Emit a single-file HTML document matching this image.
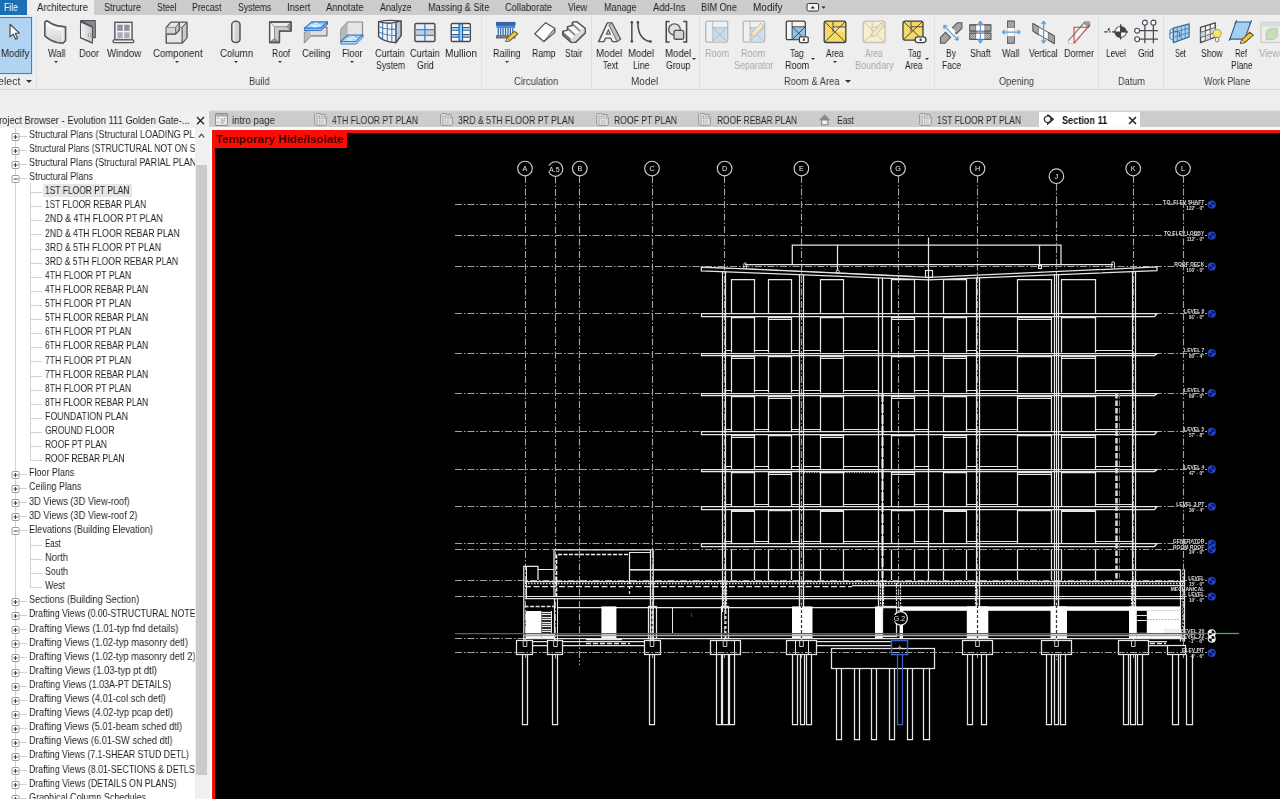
<!DOCTYPE html><html><head><meta charset="utf-8"><title>Revit - Section 11</title><style>

html,body{margin:0;padding:0}
body{width:1280px;height:799px;overflow:hidden;position:relative;background:#eeeeee;font-family:"Liberation Sans",sans-serif}
.t{position:absolute;white-space:nowrap;transform-origin:0 50%;display:block;will-change:transform}
.arr{position:absolute;width:0;height:0;display:block}
#menubar{position:absolute;left:0;top:0;width:1280px;height:14.8px;background:#cccccc;overflow:hidden}
#filetab{position:absolute;left:0;top:0;width:27px;height:14.8px;background:#1d6fb4}
#acttab{position:absolute;left:27.4px;top:0;width:67.1px;height:14.8px;background:#eeeeee}
#ribbon{position:absolute;left:0;top:14.5px;width:1280px;height:75.3px;background:#eeeeee;border-bottom:1.2px solid #d6d6d6;overflow:hidden;box-sizing:border-box}
#modbtn{position:absolute;left:-1px;top:2.5px;width:33px;height:56.5px;background:#b1d4f2;border:1px solid #4b7db1;box-shadow:0 0 1.5px 1px #cfe6fa;box-sizing:border-box}
.psep{position:absolute;top:1px;width:1px;height:72px;background:#e0e0e0}
#browser{position:absolute;left:0;top:110px;width:211px;height:689px;background:#f0f0f0;overflow:hidden}
#bhead{position:absolute;left:0;top:2px;width:208.5px;height:16px;background:#f0f0f0}
#tree{position:absolute;left:0;top:18px;width:194.5px;height:671px;background:#fff;overflow:hidden}
.vl{position:absolute;width:0;border-left:1px solid #d2d2d2}
.hl{position:absolute;height:0;border-top:1px solid #d2d2d2}
.bx{position:absolute}
#sb{position:absolute;left:194.5px;top:18px;width:13.5px;height:671px;background:#f0f0f0}
#sbthumb{position:absolute;left:1px;top:36.5px;width:11.5px;height:610px;background:#cbcbcb}
#tabs{position:absolute;left:208.5px;top:110px;width:1072px;height:17.4px;background:linear-gradient(#eeeeee 0,#cccccc 1.6px);overflow:hidden}
#tabact{position:absolute;left:830.9px;top:1.9px;width:100.6px;height:17px;background:#fff}
.ti{position:absolute;display:block;line-height:0}
#wl{position:absolute;left:209.8px;top:127.4px;width:1071px;height:672px;background:#fafafa}
#canvas{position:absolute;left:211px;top:129px;width:1069px;height:670px;background:#000;overflow:hidden}

</style></head><body><div id="wrap">
<div id="menubar">
<div id="filetab"></div><div id="acttab"></div>
<span class="t" style="left:3.5px;top:1.8px;font-size:10px;line-height:12px;color:#fff;transform:scaleX(0.869);">File</span>
<span class="t" style="left:37.0px;top:1.8px;font-size:10px;line-height:12px;color:#222;transform:scaleX(0.956);">Architecture</span>
<span class="t" style="left:103.7px;top:1.8px;font-size:10px;line-height:12px;color:#222;transform:scaleX(0.912);">Structure</span>
<span class="t" style="left:156.7px;top:1.8px;font-size:10px;line-height:12px;color:#222;transform:scaleX(0.856);">Steel</span>
<span class="t" style="left:192.0px;top:1.8px;font-size:10px;line-height:12px;color:#222;transform:scaleX(0.870);">Precast</span>
<span class="t" style="left:237.5px;top:1.8px;font-size:10px;line-height:12px;color:#222;transform:scaleX(0.866);">Systems</span>
<span class="t" style="left:286.7px;top:1.8px;font-size:10px;line-height:12px;color:#222;transform:scaleX(0.932);">Insert</span>
<span class="t" style="left:325.5px;top:1.8px;font-size:10px;line-height:12px;color:#222;transform:scaleX(0.937);">Annotate</span>
<span class="t" style="left:379.5px;top:1.8px;font-size:10px;line-height:12px;color:#222;transform:scaleX(0.885);">Analyze</span>
<span class="t" style="left:427.5px;top:1.8px;font-size:10px;line-height:12px;color:#222;transform:scaleX(0.918);">Massing &amp; Site</span>
<span class="t" style="left:505.0px;top:1.8px;font-size:10px;line-height:12px;color:#222;transform:scaleX(0.919);">Collaborate</span>
<span class="t" style="left:568.0px;top:1.8px;font-size:10px;line-height:12px;color:#222;transform:scaleX(0.884);">View</span>
<span class="t" style="left:603.7px;top:1.8px;font-size:10px;line-height:12px;color:#222;transform:scaleX(0.899);">Manage</span>
<span class="t" style="left:653.0px;top:1.8px;font-size:10px;line-height:12px;color:#222;transform:scaleX(0.943);">Add-Ins</span>
<span class="t" style="left:701.2px;top:1.8px;font-size:10px;line-height:12px;color:#222;transform:scaleX(0.907);">BIM One</span>
<span class="t" style="left:753.0px;top:1.8px;font-size:10px;line-height:12px;color:#222;transform:scaleX(1.002);">Modify</span>
<svg style="position:absolute;left:806px;top:2px" width="22" height="11" viewBox="0 0 22 11"><rect x="1" y="1.5" width="11.5" height="7.5" rx="1.5" fill="#f4f4f4" stroke="#333" stroke-width="1"/><path d="M4.5 6.5 L6.7 4 L9 6.5Z" fill="#222"/><path d="M15.5 4.5 h4 l-2 2.3z" fill="#222"/></svg>
</div>
<div id="ribbon">
<div id="modbtn"></div>
<svg style="position:absolute;left:0;top:0" width="1280" height="74" viewBox="0 14.5 1280 74">
<defs>
<linearGradient id="gv" x1="0" y1="0" x2="0" y2="1"><stop offset="0" stop-color="#fafafa"/><stop offset="1" stop-color="#cfd2d6"/></linearGradient>
<linearGradient id="gh" x1="0" y1="0" x2="1" y2="0"><stop offset="0" stop-color="#f6f6f6"/><stop offset="1" stop-color="#c4c7cb"/></linearGradient>
<linearGradient id="gd" x1="0" y1="0" x2="1" y2="1"><stop offset="0" stop-color="#9aa0a8"/><stop offset="1" stop-color="#d8dadd"/></linearGradient>
<linearGradient id="gb" x1="0" y1="0" x2="0" y2="1"><stop offset="0" stop-color="#7db9ee"/><stop offset="1" stop-color="#c8e4fb"/></linearGradient>
<pattern id="hatch" width="2" height="2" patternUnits="userSpaceOnUse"><rect width="2" height="2" fill="#bcbcbc"/><rect width="1" height="1" fill="#8c8c8c"/><rect x="1" y="1" width="1" height="1" fill="#8c8c8c"/></pattern>
</defs>
<g transform="translate(4.3,21.4) scale(0.817,0.787)"><path d="M7 3 L7 19 L11 15.5 L13.8 22 L16.2 21 L13.4 14.6 L18.5 14.2 Z" fill="#fdfdfd" stroke="#444" stroke-width="1.4" stroke-linejoin="round"/></g>
<g transform="translate(44.3,20.1) scale(0.904,0.958)"><path d="M.5 2.6 Q.5 .6 3.6 .5 Q11 6 23.5 6.4 L23.5 20.8 L20.6 23.5 Q8 23 .5 15.7 Z" fill="url(#gv)" stroke="#5c5c5c" stroke-width="1.5" stroke-linejoin="round"/><path d="M20.6 9.2 L23.5 6.4 L23.5 20.8 L20.6 23.5Z" fill="#c9ccd0"/><path d="M1.6 2.8 Q10 8.8 20.6 9.2 L20.6 23.2" fill="none" stroke="#fff" stroke-width="1.3"/><path d="M.5 2.6 Q.5 .6 3.6 .5 Q11 6 23.5 6.4 L23.5 20.8 L20.6 23.5 Q8 23 .5 15.7 Z" fill="none" stroke="#5c5c5c" stroke-width="1.5" stroke-linejoin="round"/></g>
<g transform="translate(79.9,19.6) scale(0.662,0.975)"><path d="M.8 .6 L23.4 .6 L23.4 18 L19 18 L19 7 Z" fill="#848a93" stroke="#555" stroke-width="1.4" stroke-linejoin="round"/><path d="M.9 1.6 L19 7.2 L19 23.6 L.9 18.2 Z" fill="url(#gh)" stroke="#555" stroke-width="1.6" stroke-linejoin="round"/><ellipse cx="14.6" cy="15.4" rx="2" ry="1.5" fill="#fff" stroke="#777" stroke-width="1"/></g>
<g transform="translate(112.0,20.4) scale(0.954,0.946)"><rect x="3" y="1.5" width="18" height="18.5" fill="#f4f4f4" stroke="#555" stroke-width="1.5"/><rect x="5.5" y="4" width="5.8" height="6.5" fill="#8d94a0"/><rect x="12.7" y="4" width="5.8" height="6.5" fill="#8d94a0"/><rect x="5.5" y="12" width="5.8" height="6.5" fill="#aab0ba"/><rect x="12.7" y="12" width="5.8" height="6.5" fill="#aab0ba"/><rect x="1" y="20" width="22" height="3" rx="1.5" fill="#f2f2f2" stroke="#555" stroke-width="1.3"/></g>
<g transform="translate(165.3,20.2) scale(0.938,0.954)"><path d="M1 7 L6 1.5 L23 1.5 L23 18 L18 23.5 L1 23.5 Z" fill="#e4e6e9" stroke="#555" stroke-width="1.5" stroke-linejoin="round"/><path d="M1 7 L11 7 L11 14 L1 14Z" fill="#d2d5da" stroke="#8a8a8a" stroke-width="1"/><path d="M11 7 L15 2 L15 10 L11 14 Z" fill="#bfc3c8" stroke="#6a6a6a" stroke-width="1"/><path d="M1 14 L11 14 L15 10 L15 2" fill="none" stroke="#555" stroke-width="1.2"/><path d="M18 23.5 L18 7 L23 1.5 M18 7 L15 7" stroke="#777" stroke-width="1" fill="none"/><path d="M18 7 L23 1.5 L23 18 L18 23.5Z" fill="#c6c9ce" stroke="#555" stroke-width="1"/></g>
<g transform="translate(231.0,20.0) scale(1.000,1.000)"><rect x="0.8" y="0.8" width="8.2" height="21.2" rx="4.1" ry="3.2" fill="url(#gh)" stroke="#555" stroke-width="1.5"/><rect x="4" y="3" width="2.2" height="17" fill="#d0d3d7"/></g>
<g transform="translate(268.7,20.0) scale(0.971,0.958)"><path d="M1 1.5 L23 1.5 L23 11 L11 11 L11 23 L1 23 Z" fill="#eceded" stroke="#555" stroke-width="1.5" stroke-linejoin="round"/><path d="M1 1.5 L6 6.5 L6 18.5 L1 23Z" fill="#f6f6f6"/><path d="M23 1.5 L18.5 6.5 L23 11Z" fill="#8f949b"/><path d="M1 23 L6 18.5 L11 23Z" fill="#8f949b"/><path d="M6 6.5 L18.5 6.5 L18.5 6.6 L23 11 L11 11 L11 23 L6 18.5Z" fill="#c9ccd0"/><path d="M1 1.5 L6 6.5 L18.5 6.5 L23 1.5 M6 6.5 L6 18.5 L1 23 M6 18.5 L11 23 M18.5 6.5 L23 11" stroke="#777" stroke-width=".8" fill="none"/><path d="M1 1.5 L23 1.5 L23 11 L11 11 L11 23 L1 23 Z" fill="none" stroke="#555" stroke-width="1.5" stroke-linejoin="round"/></g>
<g transform="translate(303.4,20.0) scale(1.025,0.958)"><path d="M1 13 L7 7 L23 7 L23 16 L7 16 L1 23 Z" fill="#dcdfe2" stroke="#7a7a7a" stroke-width="1.2" stroke-linejoin="round"/><path d="M1 13 L7 8 L7 16 L1 23Z" fill="#b9bcc1"/><path d="M1 8 L8 1.5 L23.5 1.5 L17 8 Z" fill="url(#gb)" stroke="#3a7cc4" stroke-width="1.2" stroke-linejoin="round"/><path d="M7 5 L17 5 M11 3 L14 3 M9 6.5 L13 6.5" stroke="#dff0ff" stroke-width="1.4"/><path d="M1 8 L17 8 L23.5 1.5 L23.5 4 L17 10.5 L1 10.5Z" fill="#8fc6f3" stroke="#3a7cc4" stroke-width="1"/></g>
<g transform="translate(339.8,20.0) scale(0.987,1.000)"><path d="M1 9 L8 1.5 L23 1.5 L23 14 L16 21 L1 21 Z" fill="#e3e5e8" stroke="#8a8a8a" stroke-width="1.2" stroke-linejoin="round"/><path d="M1 9 L8 1.5 L8 14 L1 21Z" fill="#b5b8bd"/><path d="M1 21 L8 14.5 L23.5 14.5 L16.5 21 Z" fill="url(#gb)" stroke="#3a7cc4" stroke-width="1.2" stroke-linejoin="round"/><path d="M7 18 L17 18 M10 16.3 L15 16.3 M8 19.6 L12 19.6" stroke="#dff0ff" stroke-width="1.2"/><path d="M1 21 L16.5 21 L23.5 14.5 L23.5 17 L16.5 23.5 L1 23.5Z" fill="#b5d9f7" stroke="#3a7cc4" stroke-width="1" stroke-linejoin="round"/></g>
<g transform="translate(377.6,19.2) scale(1.017,0.992)"><path d="M1 2 C8 4 14 4 18 2.5 L23 1.5 L23 16 L18 23 C11 23 5 21 1 17 Z" fill="#f1f6fb" stroke="#4a4a4a" stroke-width="1.4" stroke-linejoin="round"/><path d="M18 2.5 L23 1.5 L23 16 L18 23Z" fill="#c5c9ce" stroke="#4a4a4a" stroke-width="1.2"/><path d="M1 2 C8 0.5 16 0.5 23 1.5" fill="none" stroke="#4a4a4a" stroke-width="1.3"/><path d="M5 3 L5 20 M9.5 3.7 L9.5 22 M14 3.7 L14 23 M18 2.5 L18 23 M1 7 C7 10 13 10 18 9.5 M1 12 C7 15.5 13 16 18 16" fill="none" stroke="#3572b3" stroke-width="1"/></g>
<g transform="translate(414.0,22.2) scale(0.908,0.817)"><rect x="1" y="1" width="22" height="22" rx="1.5" fill="#e9edf2" stroke="#4a4a4a" stroke-width="1.6"/><rect x="2" y="8.5" width="20" height="7" fill="#c7ccd6"/><path d="M12 1.5 L12 22.5 M1.5 8.5 L22.5 8.5 M1.5 15.5 L22.5 15.5" stroke="#3a86d8" stroke-width="1.5"/></g>
<g transform="translate(450.4,22.2) scale(0.867,0.817)"><rect x="1" y="1" width="22" height="22" rx="1.5" fill="#fafafa" stroke="#4a4a4a" stroke-width="1.6"/><path d="M2 6 L22 6 M2 9 L22 9 M2 14.5 L22 14.5 M2 17.5 L22 17.5" stroke="#245f9e" stroke-width="1.6"/><path d="M2 7.5 L22 7.5 M2 16 L22 16" stroke="#9fd0f5" stroke-width="1.5"/><rect x="10" y="1.5" width="4" height="21" fill="#8fd0f7" stroke="#245f9e" stroke-width="1.3"/></g>
<g transform="translate(495.5,20.9) scale(0.929,0.896)"><rect x="1" y="1" width="20" height="3.4" fill="#2f66ad" stroke="#214f8c" stroke-width=".8"/><rect x="1" y="5.2" width="20" height="2.2" fill="#4d8ad2"/><rect x="1.5" y="7.4" width="19" height="8.6" fill="#eaf2fb"/><path d="M3 7.4 V16 M5.6 7.4 V16 M8.2 7.4 V16 M10.8 7.4 V16 M13.4 7.4 V16 M16 7.4 V16 M18.6 7.4 V16" stroke="#2f66ad" stroke-width="1.3"/><rect x="1" y="16" width="20" height="2.6" fill="#7b8087" stroke="#555" stroke-width=".8"/><path d="M11 22.5 L12.5 18.5 L20.5 11 L24 14 L15.5 21.5 Z" fill="#f2c84a" stroke="#6b5a2a" stroke-width="1.1" stroke-linejoin="round"/><path d="M11 22.5 L12.5 18.5 L15.5 21.5Z" fill="#f7e9c8" stroke="#6b5a2a" stroke-width=".8"/></g>
<g transform="translate(533.8,20.9) scale(0.908,0.858)"><path d="M1 14.5 L13 1.5 L23 8 L23 13 L11 23.5 Z" fill="#fbfbfb" stroke="#555" stroke-width="1.5" stroke-linejoin="round"/><path d="M11 23.5 L23 8 L23 13Z" fill="#b8bbc0" stroke="#555" stroke-width="1" stroke-linejoin="round"/></g>
<g transform="translate(562.5,21.0) scale(0.950,0.875)"><path d="M10.5 1 L15 .3 L24 8 L24 12.9 L13.8 23.7 L9 23.7 L.4 15.4 L.4 11.2 L5.3 10 L5.3 6 L10.3 4.8 Z" fill="#e9eaec" stroke="#555" stroke-width="1.5" stroke-linejoin="round"/><path d="M10.5 1 L18.5 9 L18.5 12.5 L10.5 4.8Z M5.5 6 L13.5 14 L13.5 17.5 L5.5 10Z" fill="#8d9198"/><path d="M.5 11.2 L8.7 19 L8.9 23.5 L.5 15.4Z" fill="#7d8188"/><path d="M10.5 1 L15 .3 L23.5 8 L18.5 9Z M5.5 6 L10.5 4.8 L18.5 12.5 L13.5 14Z M.5 11.2 L5.5 10 L13.5 17.5 L8.7 19Z" fill="#fcfcfc"/><path d="M8.7 19 L13.5 17.5 L13.5 14 L18.5 12.5 L18.5 9 L23.5 8 L24 12.9 L13.8 23.7 L9 23.7Z" fill="#d9dbde"/><path d="M10.5 1 L15 .3 L24 8 L24 12.9 L13.8 23.7 L9 23.7 L.4 15.4 L.4 11.2 L5.3 10 L5.3 6 L10.3 4.8 Z" fill="none" stroke="#555" stroke-width="1.4" stroke-linejoin="round"/></g>
<g transform="translate(597.7,21.0) scale(0.971,0.875)"><path d="M1 23 L10 1.5 L14.5 1.5 L23.5 20 L20 23 L15 23 L13.5 19 L8 19 L6.5 23 Z" fill="#f2f2f2" stroke="#555" stroke-width="1.5" stroke-linejoin="round"/><path d="M14.5 1.5 L23.5 20 L20 23 L11.5 4Z" fill="#bcbfc4" stroke="#555" stroke-width=".9"/><path d="M9 14.5 L11 9.5 L13 14.5Z" fill="#d0d0d0" stroke="#555" stroke-width="1.2"/></g>
<g transform="translate(629.5,20.0) scale(0.933,0.938)"><path d="M2.5 2 L2.5 22" stroke="#4a4a4a" stroke-width="1.6" fill="none"/><circle cx="2.5" cy="2" r="1.4" fill="#4a4a4a"/><circle cx="2.5" cy="22.3" r="1.4" fill="#4a4a4a"/><path d="M9 2 C9 14 14 21 22.5 22.5" stroke="#4a4a4a" stroke-width="1.6" fill="none"/><circle cx="9" cy="2" r="1.4" fill="#4a4a4a"/><circle cx="22.5" cy="22.5" r="1.4" fill="#4a4a4a"/></g>
<g transform="translate(664.8,20.0) scale(0.967,0.938)"><path d="M5 1 L1.5 1 L1.5 23 L5 23 M19 1 L22.5 1 L22.5 23 L19 23" stroke="#4a4a4a" stroke-width="1.6" fill="none"/><circle cx="10" cy="9.5" r="6" fill="#dfe1e4" stroke="#555" stroke-width="1.4"/><rect x="9.5" y="10.5" width="10" height="9.5" rx="2" fill="#d3d6da" stroke="#555" stroke-width="1.4"/></g>
<g transform="translate(704.7,19.6) scale(1.000,0.954)"><rect x="1" y="1" width="22" height="22" rx="1.5" fill="#eef0f2" stroke="#b5b8bc" stroke-width="1.35"/><rect x="8" y="8" width="14" height="14" fill="#c9dceb"/><path d="M8 1 L8 23 M8 8 L23 8 M8 8 L22 22 M22 8 L8 22" stroke="#b5b8bc" stroke-width=".95" fill="none"/></g>
<g transform="translate(742.2,19.6) scale(0.975,0.954)"><rect x="1" y="1" width="22" height="22" rx="1.5" fill="#eef0f2" stroke="#b5b8bc" stroke-width="1.35"/><rect x="8" y="8" width="14" height="14" fill="#cfdfec"/><path d="M8 1 L8 23 M8 8 L23 8 M8 8 L22 22 M22 8 L8 22" stroke="#b5b8bc" stroke-width=".95" fill="none"/><path d="M10 13 L19 3 L22.5 6 L13.5 16 L9.5 17Z" fill="#f3e6c6" stroke="#c9bea6" stroke-width="1"/></g>
<g transform="translate(785.3,19.6) scale(0.975,0.954)"><rect x="1" y="1" width="19.5" height="19.5" rx="1.5" fill="#f4f6f8" stroke="#3f3f3f" stroke-width="1.3"/><rect x="7" y="7" width="13" height="13" fill="#8fc4ea"/><path d="M7 1 L7 20.5 M7 7 L20.5 7 M7 7 L20.5 20.5 M20.5 7 L7 20.5" stroke="#3f3f3f" stroke-width=".95" fill="none"/><rect x="14.5" y="17.5" width="9" height="6" rx="1" fill="#fff" stroke="#3f3f3f" stroke-width="1.3"/><rect x="18" y="19.3" width="2" height="2.5" fill="#333"/></g>
<g transform="translate(823.2,19.6) scale(0.983,0.975)"><rect x="1" y="1" width="22" height="22" rx="2" fill="#f6d964" stroke="#3f3f3f" stroke-width="1.35"/><rect x="10" y="7" width="12" height="5" fill="#f8e89c"/><path d="M1.5 1.5 L22.5 22.5 M22.5 1.5 L1.5 22.5 M10 7 L22.5 7 M10 1.5 L10 12" stroke="#3f3f3f" stroke-width=".95" fill="none"/></g>
<g transform="translate(862.2,19.6) scale(0.992,0.975)"><rect x="1" y="1" width="22" height="22" rx="2" fill="#f5efcf" stroke="#c5c2b5" stroke-width="1.35"/><rect x="10" y="7" width="12" height="5" fill="#f7f3dd"/><path d="M1.5 1.5 L22.5 22.5 M22.5 1.5 L1.5 22.5 M10 7 L22.5 7 M10 1.5 L10 12" stroke="#c5c2b5" stroke-width=".95" fill="none"/><path d="M10 13 L19 3 L22.5 6 L13.5 16 L9.5 17Z" fill="#f3e6c6" stroke="#c9bea6" stroke-width="1"/></g>
<g transform="translate(902.0,19.6) scale(1.000,0.954)"><rect x="1" y="1" width="20" height="20" rx="2" fill="#f6d964" stroke="#3f3f3f" stroke-width="1.3"/><path d="M1.5 1.5 L20.5 20.5 M20.5 1.5 L1.5 20.5 M9 7 L21 7 M9 1.5 L9 12" stroke="#3f3f3f" stroke-width=".95" fill="none"/><rect x="13" y="17.5" width="11" height="6" rx="3" fill="#fff" stroke="#3f3f3f" stroke-width="1.3"/><rect x="17.6" y="19.3" width="2" height="2.5" fill="#333"/></g>
<g transform="translate(940.0,21.3) scale(0.912,0.913)"><path d="M13 7 L19 1 L24 1 L24 7 L18 13 Z" fill="url(#hatch)" stroke="#555" stroke-width="1.2"/><path d="M0.5 17 L6 11.5 L11.5 17 L5.5 23.5 L0.5 23.5 Z" fill="url(#hatch)" stroke="#555" stroke-width="1.2"/><path d="M9 9 L14 14 L17.5 11 L12.5 6Z" fill="#fff"/><path d="M4 4 L20 20 M4 4 L8 4.6 M4 4 L4.6 8 M20 20 L16 19.4 M20 20 L19.4 16" stroke="#5b9bd8" stroke-width="1.3" fill="none"/></g>
<g transform="translate(969.2,20.0) scale(0.929,0.967)"><rect x="0.5" y="4.5" width="7" height="6.5" fill="url(#hatch)" stroke="#555" stroke-width="1"/><rect x="16.5" y="4.5" width="7" height="6.5" fill="url(#hatch)" stroke="#555" stroke-width="1"/><rect x="0.5" y="13" width="7" height="6.5" fill="url(#hatch)" stroke="#555" stroke-width="1"/><rect x="16.5" y="13" width="7" height="6.5" fill="url(#hatch)" stroke="#555" stroke-width="1"/><rect x="7.5" y="4.5" width="9" height="6.5" fill="#fff"/><rect x="7.5" y="13" width="9" height="6.5" fill="#fff"/><path d="M0.5 4.5 H23.5 M0.5 11 H23.5 M0.5 13 H23.5 M0.5 19.5 H23.5" stroke="#555" stroke-width="1"/><path d="M12 0.5 L12 23.5 M12 0.5 L9.8 3.8 M12 0.5 L14.2 3.8 M12 23.5 L9.8 20.2 M12 23.5 L14.2 20.2" stroke="#5b9bd8" stroke-width="1.3" fill="none"/></g>
<g transform="translate(1002.0,20.0) scale(0.775,0.967)"><rect x="7" y="0.5" width="9" height="7" fill="url(#hatch)" stroke="#555" stroke-width="1.1"/><rect x="7" y="16.5" width="9" height="7" fill="url(#hatch)" stroke="#555" stroke-width="1.1"/><rect x="7" y="7.5" width="9" height="9" fill="#fff"/><path d="M7 7.5 V16.5 M16 7.5 V16.5" stroke="#bbb" stroke-width=".8"/><path d="M0.5 12 L23.5 12 M0.5 12 L3.8 9.8 M0.5 12 L3.8 14.2 M23.5 12 L20.2 9.8 M23.5 12 L20.2 14.2" stroke="#5b9bd8" stroke-width="1.3" fill="none"/></g>
<g transform="translate(1032.3,20.0) scale(0.942,0.967)"><path d="M0.5 3 L7 6.5 L7 15 L0.5 11Z" fill="url(#hatch)" stroke="#555" stroke-width="1"/><path d="M16.5 12 L23.5 16 L23.5 24 L16.5 20Z" fill="url(#hatch)" stroke="#555" stroke-width="1"/><path d="M7 6.5 L16.5 12 L16.5 20 L7 15Z" fill="#fff"/><path d="M0.5 3 L23.5 16 M0.5 11 L23.5 24" stroke="#555" stroke-width="1"/><path d="M12 0.5 L12 23.5 M12 0.5 L9.8 3.8 M12 0.5 L14.2 3.8 M12 23.5 L9.8 20.2 M12 23.5 L14.2 20.2" stroke="#5b9bd8" stroke-width="1.3" fill="none"/></g>
<g transform="translate(1067.5,20.0) scale(0.938,0.958)"><path d="M1 21 L19 1 L24 1 L24 6 L5 24 L1 24Z" fill="#f4f4f4" stroke="#c8c8c8" stroke-width="1"/><path d="M17 3 L19 1 L24 1 L24 6 L22 8Z" fill="#9a9da2"/><path d="M1 21 L19 1" stroke="#888" stroke-width="1.4"/><path d="M7 24 L7 7 L23 7 M7 24 L24 4" stroke="#c2453c" stroke-width="1.15" fill="none"/></g>
<g transform="translate(1104.2,20.0) scale(0.983,0.958)"><path d="M0 12 L3.6 12 M5 12 L6.6 12 M8 12 L24 12 M16.7 4.3 L16.7 19.6" stroke="#3d424d" stroke-width="1.3"/><path d="M3.6 9.4 L4.9 8.6 L4.9 10.9" stroke="#333" stroke-width="1.1" fill="none"/><circle cx="16.7" cy="12" r="5.8" fill="#fff" stroke="#555" stroke-width="1.1"/><path d="M16.7 12 L16.7 6.2 A5.8 5.8 0 0 1 22.5 12Z M16.7 12 L16.7 17.8 A5.8 5.8 0 0 1 10.9 12Z" fill="#3d424d"/><path d="M9.5 12 L24 12 M16.7 4.3 L16.7 19.6" stroke="#3d424d" stroke-width="1.1"/></g>
<g transform="translate(1134.5,19.3) scale(0.979,0.979)"><path d="M5.3 11.1 H24 M5.3 19.8 H24 M10.6 5.6 V24 M19.3 5.6 V24" stroke="#474b55" stroke-width="1.3" fill="none"/><circle cx="10.6" cy="2.9" r="2.5" fill="#fff" stroke="#474b55" stroke-width="1.2"/><circle cx="19.3" cy="2.9" r="2.5" fill="#fff" stroke="#474b55" stroke-width="1.2"/><circle cx="2.7" cy="11.1" r="2.5" fill="#fff" stroke="#474b55" stroke-width="1.2"/><circle cx="2.7" cy="19.8" r="2.5" fill="#fff" stroke="#474b55" stroke-width="1.2"/></g>
<g transform="translate(1169.0,22.0) scale(0.875,0.875)"><path d="M1 9 L5 6.5 L5 20.5 L1 18Z" fill="#dcecf9" stroke="#3a6a9c" stroke-width="1.1"/><path d="M5 6.5 L23 1.5 L23 16.5 L5 23 Z" fill="#a9d1f1" stroke="#3a6a9c" stroke-width="1.4" stroke-linejoin="round"/><path d="M9.5 5.3 V21.5 M14 4 V19.8 M18.5 2.8 V18.2 M5 11.5 L23 6.5 M5 17 L23 11.5" stroke="#4f84b8" stroke-width="1.1" fill="none"/><path d="M1 13 C4 10 9 9 12 11.5 L12 17" stroke="#3a6a9c" stroke-width="1.1" fill="none"/></g>
<g transform="translate(1199.6,21.0) scale(0.921,0.917)"><path d="M1 6.5 L17 1.5 L17 17 L1 23 Z" fill="#f3f3f3" stroke="#4a4a4a" stroke-width="1.5" stroke-linejoin="round"/><path d="M1 12 L17 6.5 M1 17.5 L17 12 M6.3 4.8 V21 M11.6 3.2 V19" stroke="#4a4a4a" stroke-width="1.2"/><path d="M1 12 L6.3 10.2 V15.6 L1 17.5Z M6.3 15.6 L11.6 13.7 V19 L6.3 21Z M11.6 8.3 L17 6.5 V12 L11.6 13.7Z" fill="#c3c7d3" opacity=".7"/><circle cx="19" cy="13.2" r="4.4" fill="#f6e866" stroke="#a79a3e" stroke-width="1"/><rect x="17.3" y="17.4" width="3.4" height="4.6" rx="1" fill="#f4f4f4" stroke="#666" stroke-width="1"/></g>
<g transform="translate(1229.4,20.0) scale(0.996,0.979)"><path d="M6.5 1.5 L21.5 1.5 L15.5 19 L0.5 19 Z" fill="#a3cff0" stroke="#35618f" stroke-width="1.15" stroke-linejoin="round"/><path d="M7.5 -.3 L5.6 3.3 M22.4 -.3 L20.6 3.3 M1.4 17.2 L-.4 20.8" stroke="#2a5688" stroke-width="1.1"/><path d="M11 23.5 L12.5 19.5 L20.5 12 L24 15 L15.5 22.5 Z" fill="#f2c84a" stroke="#6b5a2a" stroke-width="1.1" stroke-linejoin="round"/><path d="M11 23.5 L12.5 19.5 L15.5 22.5Z" fill="#f7e9c8" stroke="#6b5a2a" stroke-width=".8"/></g>
<g transform="translate(1260.3,20.0) scale(1.000,0.958)"><rect x="0.5" y="2" width="26" height="21" rx="1" fill="#ececec" stroke="#cfcfcf" stroke-width="1.4"/><rect x="0.5" y="2" width="26" height="4.5" fill="#dcdcdc"/><path d="M6 11 L10 8.5 L17 8.5 L17 17 L13 20 L6 20Z" fill="#c5dcb9" stroke="#b5c9ab" stroke-width="1"/></g>
</svg>
<div class="psep" style="left:36.0px"></div>
<div class="psep" style="left:480.5px"></div>
<div class="psep" style="left:591.0px"></div>
<div class="psep" style="left:698.5px"></div>
<div class="psep" style="left:933.5px"></div>
<div class="psep" style="left:1097.5px"></div>
<div class="psep" style="left:1163.0px"></div>
<span class="t" style="left:1.2px;top:33.3px;font-size:10px;line-height:12px;color:#1e1e1e;transform:scaleX(0.961);">Modify</span>
<span class="t" style="left:47.5px;top:33.3px;font-size:10px;line-height:12px;color:#1e1e1e;transform:scaleX(0.918);">Wall</span>
<span class="t" style="left:78.7px;top:33.3px;font-size:10px;line-height:12px;color:#1e1e1e;transform:scaleX(0.923);">Door</span>
<span class="t" style="left:107.0px;top:33.3px;font-size:10px;line-height:12px;color:#1e1e1e;transform:scaleX(0.962);">Window</span>
<span class="t" style="left:152.5px;top:33.3px;font-size:10px;line-height:12px;color:#1e1e1e;transform:scaleX(0.958);">Component</span>
<span class="t" style="left:219.5px;top:33.3px;font-size:10px;line-height:12px;color:#1e1e1e;transform:scaleX(0.958);">Column</span>
<span class="t" style="left:271.7px;top:33.3px;font-size:10px;line-height:12px;color:#1e1e1e;transform:scaleX(0.866);">Roof</span>
<span class="t" style="left:302.0px;top:33.3px;font-size:10px;line-height:12px;color:#1e1e1e;transform:scaleX(0.932);">Ceiling</span>
<span class="t" style="left:342.0px;top:33.3px;font-size:10px;line-height:12px;color:#1e1e1e;transform:scaleX(0.900);">Floor</span>
<span class="t" style="left:445.0px;top:33.3px;font-size:10px;line-height:12px;color:#1e1e1e;transform:scaleX(1.010);">Mullion</span>
<span class="t" style="left:493.0px;top:33.3px;font-size:10px;line-height:12px;color:#1e1e1e;transform:scaleX(0.900);">Railing</span>
<span class="t" style="left:532.0px;top:33.3px;font-size:10px;line-height:12px;color:#1e1e1e;transform:scaleX(0.881);">Ramp</span>
<span class="t" style="left:565.0px;top:33.3px;font-size:10px;line-height:12px;color:#1e1e1e;transform:scaleX(0.851);">Stair</span>
<span class="t" style="left:704.5px;top:33.3px;font-size:10px;line-height:12px;color:#a9a9a9;transform:scaleX(0.907);">Room</span>
<span class="t" style="left:826.2px;top:33.3px;font-size:10px;line-height:12px;color:#1e1e1e;transform:scaleX(0.829);">Area</span>
<span class="t" style="left:970.0px;top:33.3px;font-size:10px;line-height:12px;color:#1e1e1e;transform:scaleX(0.887);">Shaft</span>
<span class="t" style="left:1002.0px;top:33.3px;font-size:10px;line-height:12px;color:#1e1e1e;transform:scaleX(0.918);">Wall</span>
<span class="t" style="left:1028.7px;top:33.3px;font-size:10px;line-height:12px;color:#1e1e1e;transform:scaleX(0.878);">Vertical</span>
<span class="t" style="left:1063.7px;top:33.3px;font-size:10px;line-height:12px;color:#1e1e1e;transform:scaleX(0.900);">Dormer</span>
<span class="t" style="left:1106.2px;top:33.3px;font-size:10px;line-height:12px;color:#1e1e1e;transform:scaleX(0.837);">Level</span>
<span class="t" style="left:1138.0px;top:33.3px;font-size:10px;line-height:12px;color:#1e1e1e;transform:scaleX(0.831);">Grid</span>
<span class="t" style="left:1175.0px;top:33.3px;font-size:10px;line-height:12px;color:#1e1e1e;transform:scaleX(0.713);">Set</span>
<span class="t" style="left:1200.5px;top:33.3px;font-size:10px;line-height:12px;color:#1e1e1e;transform:scaleX(0.860);">Show</span>
<span class="t" style="left:1258.7px;top:33.3px;font-size:10px;line-height:12px;color:#a9a9a9;transform:scaleX(0.931);">Viewer</span>
<span class="t" style="left:375.0px;top:33.3px;font-size:10px;line-height:12px;color:#1e1e1e;transform:scaleX(0.915);">Curtain</span>
<span class="t" style="left:375.5px;top:45.3px;font-size:10px;line-height:12px;color:#1e1e1e;transform:scaleX(0.870);">System</span>
<span class="t" style="left:410.0px;top:33.3px;font-size:10px;line-height:12px;color:#1e1e1e;transform:scaleX(0.915);">Curtain</span>
<span class="t" style="left:417.0px;top:45.3px;font-size:10px;line-height:12px;color:#1e1e1e;transform:scaleX(0.884);">Grid</span>
<span class="t" style="left:596.2px;top:33.3px;font-size:10px;line-height:12px;color:#1e1e1e;transform:scaleX(0.966);">Model</span>
<span class="t" style="left:602.5px;top:45.3px;font-size:10px;line-height:12px;color:#1e1e1e;transform:scaleX(0.818);">Text</span>
<span class="t" style="left:628.0px;top:33.3px;font-size:10px;line-height:12px;color:#1e1e1e;transform:scaleX(0.955);">Model</span>
<span class="t" style="left:633.0px;top:45.3px;font-size:10px;line-height:12px;color:#1e1e1e;transform:scaleX(0.873);">Line</span>
<span class="t" style="left:664.5px;top:33.3px;font-size:10px;line-height:12px;color:#1e1e1e;transform:scaleX(0.962);">Model</span>
<span class="t" style="left:665.7px;top:45.3px;font-size:10px;line-height:12px;color:#1e1e1e;transform:scaleX(0.874);">Group</span>
<span class="t" style="left:741.2px;top:33.3px;font-size:10px;line-height:12px;color:#a9a9a9;transform:scaleX(0.911);">Room</span>
<span class="t" style="left:733.7px;top:45.3px;font-size:10px;line-height:12px;color:#a9a9a9;transform:scaleX(0.895);">Separator</span>
<span class="t" style="left:790.0px;top:33.3px;font-size:10px;line-height:12px;color:#1e1e1e;transform:scaleX(0.850);">Tag</span>
<span class="t" style="left:784.5px;top:45.3px;font-size:10px;line-height:12px;color:#1e1e1e;transform:scaleX(0.907);">Room</span>
<span class="t" style="left:865.0px;top:33.3px;font-size:10px;line-height:12px;color:#a9a9a9;transform:scaleX(0.829);">Area</span>
<span class="t" style="left:854.5px;top:45.3px;font-size:10px;line-height:12px;color:#a9a9a9;transform:scaleX(0.904);">Boundary</span>
<span class="t" style="left:907.5px;top:33.3px;font-size:10px;line-height:12px;color:#1e1e1e;transform:scaleX(0.819);">Tag</span>
<span class="t" style="left:905.0px;top:45.3px;font-size:10px;line-height:12px;color:#1e1e1e;transform:scaleX(0.829);">Area</span>
<span class="t" style="left:946.2px;top:33.3px;font-size:10px;line-height:12px;color:#1e1e1e;transform:scaleX(0.857);">By</span>
<span class="t" style="left:941.5px;top:45.3px;font-size:10px;line-height:12px;color:#1e1e1e;transform:scaleX(0.855);">Face</span>
<span class="t" style="left:1235.0px;top:33.3px;font-size:10px;line-height:12px;color:#1e1e1e;transform:scaleX(0.771);">Ref</span>
<span class="t" style="left:1230.5px;top:45.3px;font-size:10px;line-height:12px;color:#1e1e1e;transform:scaleX(0.841);">Plane</span>
<i class="arr" style="left:53.9px;top:46.3px;border-left:2.1px solid transparent;border-right:2.1px solid transparent;border-top:2.4px solid #333"></i>
<i class="arr" style="left:174.9px;top:46.3px;border-left:2.1px solid transparent;border-right:2.1px solid transparent;border-top:2.4px solid #333"></i>
<i class="arr" style="left:233.9px;top:46.3px;border-left:2.1px solid transparent;border-right:2.1px solid transparent;border-top:2.4px solid #333"></i>
<i class="arr" style="left:278.4px;top:46.3px;border-left:2.1px solid transparent;border-right:2.1px solid transparent;border-top:2.4px solid #333"></i>
<i class="arr" style="left:349.9px;top:46.3px;border-left:2.1px solid transparent;border-right:2.1px solid transparent;border-top:2.4px solid #333"></i>
<i class="arr" style="left:504.9px;top:46.3px;border-left:2.1px solid transparent;border-right:2.1px solid transparent;border-top:2.4px solid #333"></i>
<i class="arr" style="left:832.9px;top:46.3px;border-left:2.1px solid transparent;border-right:2.1px solid transparent;border-top:2.4px solid #333"></i>
<i class="arr" style="left:691.9px;top:43.8px;border-left:2.1px solid transparent;border-right:2.1px solid transparent;border-top:2.4px solid #333"></i>
<i class="arr" style="left:810.9px;top:43.8px;border-left:2.1px solid transparent;border-right:2.1px solid transparent;border-top:2.4px solid #333"></i>
<i class="arr" style="left:925.4px;top:43.8px;border-left:2.1px solid transparent;border-right:2.1px solid transparent;border-top:2.4px solid #333"></i>
<span class="t" style="left:-9.0px;top:61.3px;font-size:10px;line-height:12px;color:#3c3c3c;transform:scaleX(1.061);">Select</span>
<span class="t" style="left:248.7px;top:61.3px;font-size:10px;line-height:12px;color:#3c3c3c;transform:scaleX(0.922);">Build</span>
<span class="t" style="left:513.7px;top:61.3px;font-size:10px;line-height:12px;color:#3c3c3c;transform:scaleX(0.938);">Circulation</span>
<span class="t" style="left:631.0px;top:61.3px;font-size:10px;line-height:12px;color:#3c3c3c;transform:scaleX(0.991);">Model</span>
<span class="t" style="left:783.7px;top:61.3px;font-size:10px;line-height:12px;color:#3c3c3c;transform:scaleX(0.933);">Room &amp; Area</span>
<span class="t" style="left:999.2px;top:61.3px;font-size:10px;line-height:12px;color:#3c3c3c;transform:scaleX(0.926);">Opening</span>
<span class="t" style="left:1117.5px;top:61.3px;font-size:10px;line-height:12px;color:#3c3c3c;transform:scaleX(0.917);">Datum</span>
<span class="t" style="left:1203.7px;top:61.3px;font-size:10px;line-height:12px;color:#3c3c3c;transform:scaleX(0.899);">Work Plane</span>
<i class="arr" style="left:25.8px;top:65.6px;border-left:3.1px solid transparent;border-right:3.1px solid transparent;border-top:3.3px solid #333"></i>
<i class="arr" style="left:844.5px;top:65.6px;border-left:3.1px solid transparent;border-right:3.1px solid transparent;border-top:3.3px solid #333"></i>
</div>
<div id="gap"></div>
<div id="browser">
<div id="bhead"><span class="t" style="left:-1.0px;top:2.2px;font-size:10.5px;line-height:12.5px;color:#1e1e1e;transform:scaleX(0.894);">roject Browser - Evolution 111 Golden Gate-...</span><svg style="position:absolute;left:196px;top:4.2px" width="9" height="9" viewBox="0 0 9 9"><path d="M1 1 L8 8.3 M8 1 L1 8.3" stroke="#222" stroke-width="1.25"/></svg></div>
<div id="tree">
<div class="vl" style="left:15px;top:0;height:679.0px"></div>
<div class="vl" style="left:30px;top:55.3px;height:277.7px"></div>
<div class="vl" style="left:30px;top:408.0px;height:52.0px"></div>
<div class="hl" style="left:19px;top:8px;width:8px"></div>
<svg class="bx" style="left:11px;top:4.5px" width="9" height="8" viewBox="0 0 9 8"><rect x="1" y=".5" width="7" height="7" rx=".8" fill="#fff" stroke="#9c9c9c"/><g stroke="#3a3a3a" stroke-width="1"><path d="M2.5 4 H6.5"/><path d="M4.5 2 V6"/></g></svg>
<span class="t" style="left:29.0px;top:-0.2px;font-size:10.5px;line-height:12.5px;color:#1e1e1e;transform:scaleX(0.864);">Structural Plans (Structural LOADING PLAN)</span>
<div class="hl" style="left:19px;top:22px;width:8px"></div>
<svg class="bx" style="left:11px;top:18.5px" width="9" height="8" viewBox="0 0 9 8"><rect x="1" y=".5" width="7" height="7" rx=".8" fill="#fff" stroke="#9c9c9c"/><g stroke="#3a3a3a" stroke-width="1"><path d="M2.5 4 H6.5"/><path d="M4.5 2 V6"/></g></svg>
<span class="t" style="left:29.0px;top:13.9px;font-size:10.5px;line-height:12.5px;color:#1e1e1e;transform:scaleX(0.815);">Structural Plans (STRUCTURAL NOT ON SHEETS)</span>
<div class="hl" style="left:19px;top:36px;width:8px"></div>
<svg class="bx" style="left:11px;top:32.5px" width="9" height="8" viewBox="0 0 9 8"><rect x="1" y=".5" width="7" height="7" rx=".8" fill="#fff" stroke="#9c9c9c"/><g stroke="#3a3a3a" stroke-width="1"><path d="M2.5 4 H6.5"/><path d="M4.5 2 V6"/></g></svg>
<span class="t" style="left:29.0px;top:28.0px;font-size:10.5px;line-height:12.5px;color:#1e1e1e;transform:scaleX(0.859);">Structural Plans (Structural PARIAL PLANS)</span>
<div class="hl" style="left:19px;top:50px;width:8px"></div>
<svg class="bx" style="left:11px;top:46.5px" width="9" height="8" viewBox="0 0 9 8"><rect x="1" y=".5" width="7" height="7" rx=".8" fill="#fff" stroke="#9c9c9c"/><g stroke="#3a3a3a" stroke-width="1"><path d="M2.5 4 H6.5"/></g></svg>
<span class="t" style="left:29.0px;top:42.1px;font-size:10.5px;line-height:12.5px;color:#1e1e1e;transform:scaleX(0.864);">Structural Plans</span>
<div style="position:absolute;left:42.5px;top:55.9px;width:89px;height:13px;background:#e6e6e6"></div>
<div class="hl" style="left:30px;top:64px;width:12px"></div>
<span class="t" style="left:45.0px;top:56.2px;font-size:10.5px;line-height:12.5px;color:#1e1e1e;transform:scaleX(0.807);">1ST FLOOR PT PLAN</span>
<div class="hl" style="left:30px;top:78px;width:12px"></div>
<span class="t" style="left:45.0px;top:70.3px;font-size:10.5px;line-height:12.5px;color:#1e1e1e;transform:scaleX(0.792);">1ST FLOOR REBAR PLAN</span>
<div class="hl" style="left:30px;top:92px;width:12px"></div>
<span class="t" style="left:45.0px;top:84.4px;font-size:10.5px;line-height:12.5px;color:#1e1e1e;transform:scaleX(0.845);">2ND &amp; 4TH FLOOR PT PLAN</span>
<div class="hl" style="left:30px;top:106px;width:12px"></div>
<span class="t" style="left:45.0px;top:98.5px;font-size:10.5px;line-height:12.5px;color:#1e1e1e;transform:scaleX(0.831);">2ND &amp; 4TH FLOOR REBAR PLAN</span>
<div class="hl" style="left:30px;top:121px;width:12px"></div>
<span class="t" style="left:45.0px;top:112.6px;font-size:10.5px;line-height:12.5px;color:#1e1e1e;transform:scaleX(0.833);">3RD &amp; 5TH FLOOR PT PLAN</span>
<div class="hl" style="left:30px;top:135px;width:12px"></div>
<span class="t" style="left:45.0px;top:126.7px;font-size:10.5px;line-height:12.5px;color:#1e1e1e;transform:scaleX(0.822);">3RD &amp; 5TH FLOOR REBAR PLAN</span>
<div class="hl" style="left:30px;top:149px;width:12px"></div>
<span class="t" style="left:45.0px;top:140.8px;font-size:10.5px;line-height:12.5px;color:#1e1e1e;transform:scaleX(0.818);">4TH FLOOR PT PLAN</span>
<div class="hl" style="left:30px;top:163px;width:12px"></div>
<span class="t" style="left:45.0px;top:154.9px;font-size:10.5px;line-height:12.5px;color:#1e1e1e;transform:scaleX(0.804);">4TH FLOOR REBAR PLAN</span>
<div class="hl" style="left:30px;top:177px;width:12px"></div>
<span class="t" style="left:45.0px;top:169.0px;font-size:10.5px;line-height:12.5px;color:#1e1e1e;transform:scaleX(0.818);">5TH FLOOR PT PLAN</span>
<div class="hl" style="left:30px;top:191px;width:12px"></div>
<span class="t" style="left:45.0px;top:183.1px;font-size:10.5px;line-height:12.5px;color:#1e1e1e;transform:scaleX(0.804);">5TH FLOOR REBAR PLAN</span>
<div class="hl" style="left:30px;top:205px;width:12px"></div>
<span class="t" style="left:45.0px;top:197.2px;font-size:10.5px;line-height:12.5px;color:#1e1e1e;transform:scaleX(0.818);">6TH FLOOR PT PLAN</span>
<div class="hl" style="left:30px;top:219px;width:12px"></div>
<span class="t" style="left:45.0px;top:211.3px;font-size:10.5px;line-height:12.5px;color:#1e1e1e;transform:scaleX(0.804);">6TH FLOOR REBAR PLAN</span>
<div class="hl" style="left:30px;top:233px;width:12px"></div>
<span class="t" style="left:45.0px;top:225.5px;font-size:10.5px;line-height:12.5px;color:#1e1e1e;transform:scaleX(0.818);">7TH FLOOR PT PLAN</span>
<div class="hl" style="left:30px;top:248px;width:12px"></div>
<span class="t" style="left:45.0px;top:239.6px;font-size:10.5px;line-height:12.5px;color:#1e1e1e;transform:scaleX(0.804);">7TH FLOOR REBAR PLAN</span>
<div class="hl" style="left:30px;top:262px;width:12px"></div>
<span class="t" style="left:45.0px;top:253.7px;font-size:10.5px;line-height:12.5px;color:#1e1e1e;transform:scaleX(0.818);">8TH FLOOR PT PLAN</span>
<div class="hl" style="left:30px;top:276px;width:12px"></div>
<span class="t" style="left:45.0px;top:267.8px;font-size:10.5px;line-height:12.5px;color:#1e1e1e;transform:scaleX(0.804);">8TH FLOOR REBAR PLAN</span>
<div class="hl" style="left:30px;top:290px;width:12px"></div>
<span class="t" style="left:45.0px;top:281.9px;font-size:10.5px;line-height:12.5px;color:#1e1e1e;transform:scaleX(0.839);">FOUNDATION PLAN</span>
<div class="hl" style="left:30px;top:304px;width:12px"></div>
<span class="t" style="left:45.0px;top:296.0px;font-size:10.5px;line-height:12.5px;color:#1e1e1e;transform:scaleX(0.810);">GROUND FLOOR</span>
<div class="hl" style="left:30px;top:318px;width:12px"></div>
<span class="t" style="left:45.0px;top:310.1px;font-size:10.5px;line-height:12.5px;color:#1e1e1e;transform:scaleX(0.807);">ROOF PT PLAN</span>
<div class="hl" style="left:30px;top:332px;width:12px"></div>
<span class="t" style="left:45.0px;top:324.2px;font-size:10.5px;line-height:12.5px;color:#1e1e1e;transform:scaleX(0.796);">ROOF REBAR PLAN</span>
<div class="hl" style="left:19px;top:346px;width:8px"></div>
<svg class="bx" style="left:11px;top:342.5px" width="9" height="8" viewBox="0 0 9 8"><rect x="1" y=".5" width="7" height="7" rx=".8" fill="#fff" stroke="#9c9c9c"/><g stroke="#3a3a3a" stroke-width="1"><path d="M2.5 4 H6.5"/><path d="M4.5 2 V6"/></g></svg>
<span class="t" style="left:29.0px;top:338.3px;font-size:10.5px;line-height:12.5px;color:#1e1e1e;transform:scaleX(0.855);">Floor Plans</span>
<div class="hl" style="left:19px;top:360px;width:8px"></div>
<svg class="bx" style="left:11px;top:356.5px" width="9" height="8" viewBox="0 0 9 8"><rect x="1" y=".5" width="7" height="7" rx=".8" fill="#fff" stroke="#9c9c9c"/><g stroke="#3a3a3a" stroke-width="1"><path d="M2.5 4 H6.5"/><path d="M4.5 2 V6"/></g></svg>
<span class="t" style="left:29.0px;top:352.4px;font-size:10.5px;line-height:12.5px;color:#1e1e1e;transform:scaleX(0.855);">Ceiling Plans</span>
<div class="hl" style="left:19px;top:374px;width:8px"></div>
<svg class="bx" style="left:11px;top:370.5px" width="9" height="8" viewBox="0 0 9 8"><rect x="1" y=".5" width="7" height="7" rx=".8" fill="#fff" stroke="#9c9c9c"/><g stroke="#3a3a3a" stroke-width="1"><path d="M2.5 4 H6.5"/><path d="M4.5 2 V6"/></g></svg>
<span class="t" style="left:29.0px;top:366.5px;font-size:10.5px;line-height:12.5px;color:#1e1e1e;transform:scaleX(0.879);">3D Views (3D View-roof)</span>
<div class="hl" style="left:19px;top:388px;width:8px"></div>
<svg class="bx" style="left:11px;top:384.5px" width="9" height="8" viewBox="0 0 9 8"><rect x="1" y=".5" width="7" height="7" rx=".8" fill="#fff" stroke="#9c9c9c"/><g stroke="#3a3a3a" stroke-width="1"><path d="M2.5 4 H6.5"/><path d="M4.5 2 V6"/></g></svg>
<span class="t" style="left:29.0px;top:380.6px;font-size:10.5px;line-height:12.5px;color:#1e1e1e;transform:scaleX(0.880);">3D Views (3D View-roof 2)</span>
<div class="hl" style="left:19px;top:402px;width:8px"></div>
<svg class="bx" style="left:11px;top:398.5px" width="9" height="8" viewBox="0 0 9 8"><rect x="1" y=".5" width="7" height="7" rx=".8" fill="#fff" stroke="#9c9c9c"/><g stroke="#3a3a3a" stroke-width="1"><path d="M2.5 4 H6.5"/></g></svg>
<span class="t" style="left:29.0px;top:394.7px;font-size:10.5px;line-height:12.5px;color:#1e1e1e;transform:scaleX(0.874);">Elevations (Building Elevation)</span>
<div class="hl" style="left:30px;top:417px;width:12px"></div>
<span class="t" style="left:45.0px;top:408.8px;font-size:10.5px;line-height:12.5px;color:#1e1e1e;transform:scaleX(0.752);">East</span>
<div class="hl" style="left:30px;top:431px;width:12px"></div>
<span class="t" style="left:45.0px;top:422.9px;font-size:10.5px;line-height:12.5px;color:#1e1e1e;transform:scaleX(0.896);">North</span>
<div class="hl" style="left:30px;top:445px;width:12px"></div>
<span class="t" style="left:45.0px;top:437.0px;font-size:10.5px;line-height:12.5px;color:#1e1e1e;transform:scaleX(0.838);">South</span>
<div class="hl" style="left:30px;top:459px;width:12px"></div>
<span class="t" style="left:45.0px;top:451.2px;font-size:10.5px;line-height:12.5px;color:#1e1e1e;transform:scaleX(0.843);">West</span>
<div class="hl" style="left:19px;top:473px;width:8px"></div>
<svg class="bx" style="left:11px;top:469.5px" width="9" height="8" viewBox="0 0 9 8"><rect x="1" y=".5" width="7" height="7" rx=".8" fill="#fff" stroke="#9c9c9c"/><g stroke="#3a3a3a" stroke-width="1"><path d="M2.5 4 H6.5"/><path d="M4.5 2 V6"/></g></svg>
<span class="t" style="left:29.0px;top:465.3px;font-size:10.5px;line-height:12.5px;color:#1e1e1e;transform:scaleX(0.878);">Sections (Building Section)</span>
<div class="hl" style="left:19px;top:487px;width:8px"></div>
<svg class="bx" style="left:11px;top:483.5px" width="9" height="8" viewBox="0 0 9 8"><rect x="1" y=".5" width="7" height="7" rx=".8" fill="#fff" stroke="#9c9c9c"/><g stroke="#3a3a3a" stroke-width="1"><path d="M2.5 4 H6.5"/><path d="M4.5 2 V6"/></g></svg>
<span class="t" style="left:29.0px;top:479.4px;font-size:10.5px;line-height:12.5px;color:#1e1e1e;transform:scaleX(0.832);">Drafting Views (0.00-STRUCTURAL NOTES)</span>
<div class="hl" style="left:19px;top:501px;width:8px"></div>
<svg class="bx" style="left:11px;top:497.5px" width="9" height="8" viewBox="0 0 9 8"><rect x="1" y=".5" width="7" height="7" rx=".8" fill="#fff" stroke="#9c9c9c"/><g stroke="#3a3a3a" stroke-width="1"><path d="M2.5 4 H6.5"/><path d="M4.5 2 V6"/></g></svg>
<span class="t" style="left:29.0px;top:493.5px;font-size:10.5px;line-height:12.5px;color:#1e1e1e;transform:scaleX(0.899);">Drafting Views (1.01-typ fnd details)</span>
<div class="hl" style="left:19px;top:515px;width:8px"></div>
<svg class="bx" style="left:11px;top:511.5px" width="9" height="8" viewBox="0 0 9 8"><rect x="1" y=".5" width="7" height="7" rx=".8" fill="#fff" stroke="#9c9c9c"/><g stroke="#3a3a3a" stroke-width="1"><path d="M2.5 4 H6.5"/><path d="M4.5 2 V6"/></g></svg>
<span class="t" style="left:29.0px;top:507.6px;font-size:10.5px;line-height:12.5px;color:#1e1e1e;transform:scaleX(0.891);">Drafting Views (1.02-typ masonry detl)</span>
<div class="hl" style="left:19px;top:529px;width:8px"></div>
<svg class="bx" style="left:11px;top:525.5px" width="9" height="8" viewBox="0 0 9 8"><rect x="1" y=".5" width="7" height="7" rx=".8" fill="#fff" stroke="#9c9c9c"/><g stroke="#3a3a3a" stroke-width="1"><path d="M2.5 4 H6.5"/><path d="M4.5 2 V6"/></g></svg>
<span class="t" style="left:29.0px;top:521.7px;font-size:10.5px;line-height:12.5px;color:#1e1e1e;transform:scaleX(0.890);">Drafting Views (1.02-typ masonry detl 2)</span>
<div class="hl" style="left:19px;top:544px;width:8px"></div>
<svg class="bx" style="left:11px;top:540.5px" width="9" height="8" viewBox="0 0 9 8"><rect x="1" y=".5" width="7" height="7" rx=".8" fill="#fff" stroke="#9c9c9c"/><g stroke="#3a3a3a" stroke-width="1"><path d="M2.5 4 H6.5"/><path d="M4.5 2 V6"/></g></svg>
<span class="t" style="left:29.0px;top:535.8px;font-size:10.5px;line-height:12.5px;color:#1e1e1e;transform:scaleX(0.908);">Drafting Views (1.03-typ pt dtl)</span>
<div class="hl" style="left:19px;top:558px;width:8px"></div>
<svg class="bx" style="left:11px;top:554.5px" width="9" height="8" viewBox="0 0 9 8"><rect x="1" y=".5" width="7" height="7" rx=".8" fill="#fff" stroke="#9c9c9c"/><g stroke="#3a3a3a" stroke-width="1"><path d="M2.5 4 H6.5"/><path d="M4.5 2 V6"/></g></svg>
<span class="t" style="left:29.0px;top:549.9px;font-size:10.5px;line-height:12.5px;color:#1e1e1e;transform:scaleX(0.848);">Drafting Views (1.03A-PT DETAILS)</span>
<div class="hl" style="left:19px;top:572px;width:8px"></div>
<svg class="bx" style="left:11px;top:568.5px" width="9" height="8" viewBox="0 0 9 8"><rect x="1" y=".5" width="7" height="7" rx=".8" fill="#fff" stroke="#9c9c9c"/><g stroke="#3a3a3a" stroke-width="1"><path d="M2.5 4 H6.5"/><path d="M4.5 2 V6"/></g></svg>
<span class="t" style="left:29.0px;top:564.0px;font-size:10.5px;line-height:12.5px;color:#1e1e1e;transform:scaleX(0.890);">Drafting Views (4.01-col sch detl)</span>
<div class="hl" style="left:19px;top:586px;width:8px"></div>
<svg class="bx" style="left:11px;top:582.5px" width="9" height="8" viewBox="0 0 9 8"><rect x="1" y=".5" width="7" height="7" rx=".8" fill="#fff" stroke="#9c9c9c"/><g stroke="#3a3a3a" stroke-width="1"><path d="M2.5 4 H6.5"/><path d="M4.5 2 V6"/></g></svg>
<span class="t" style="left:29.0px;top:578.1px;font-size:10.5px;line-height:12.5px;color:#1e1e1e;transform:scaleX(0.895);">Drafting Views (4.02-typ pcap detl)</span>
<div class="hl" style="left:19px;top:600px;width:8px"></div>
<svg class="bx" style="left:11px;top:596.5px" width="9" height="8" viewBox="0 0 9 8"><rect x="1" y=".5" width="7" height="7" rx=".8" fill="#fff" stroke="#9c9c9c"/><g stroke="#3a3a3a" stroke-width="1"><path d="M2.5 4 H6.5"/><path d="M4.5 2 V6"/></g></svg>
<span class="t" style="left:29.0px;top:592.2px;font-size:10.5px;line-height:12.5px;color:#1e1e1e;transform:scaleX(0.887);">Drafting Views (5.01-beam sched dtl)</span>
<div class="hl" style="left:19px;top:614px;width:8px"></div>
<svg class="bx" style="left:11px;top:610.5px" width="9" height="8" viewBox="0 0 9 8"><rect x="1" y=".5" width="7" height="7" rx=".8" fill="#fff" stroke="#9c9c9c"/><g stroke="#3a3a3a" stroke-width="1"><path d="M2.5 4 H6.5"/><path d="M4.5 2 V6"/></g></svg>
<span class="t" style="left:29.0px;top:606.3px;font-size:10.5px;line-height:12.5px;color:#1e1e1e;transform:scaleX(0.879);">Drafting Views (6.01-SW sched dtl)</span>
<div class="hl" style="left:19px;top:628px;width:8px"></div>
<svg class="bx" style="left:11px;top:624.5px" width="9" height="8" viewBox="0 0 9 8"><rect x="1" y=".5" width="7" height="7" rx=".8" fill="#fff" stroke="#9c9c9c"/><g stroke="#3a3a3a" stroke-width="1"><path d="M2.5 4 H6.5"/><path d="M4.5 2 V6"/></g></svg>
<span class="t" style="left:29.0px;top:620.4px;font-size:10.5px;line-height:12.5px;color:#1e1e1e;transform:scaleX(0.829);">Drafting Views (7.1-SHEAR STUD DETL)</span>
<div class="hl" style="left:19px;top:642px;width:8px"></div>
<svg class="bx" style="left:11px;top:638.5px" width="9" height="8" viewBox="0 0 9 8"><rect x="1" y=".5" width="7" height="7" rx=".8" fill="#fff" stroke="#9c9c9c"/><g stroke="#3a3a3a" stroke-width="1"><path d="M2.5 4 H6.5"/><path d="M4.5 2 V6"/></g></svg>
<span class="t" style="left:29.0px;top:634.5px;font-size:10.5px;line-height:12.5px;color:#1e1e1e;transform:scaleX(0.836);">Drafting Views (8.01-SECTIONS &amp; DETLS)</span>
<div class="hl" style="left:19px;top:656px;width:8px"></div>
<svg class="bx" style="left:11px;top:652.5px" width="9" height="8" viewBox="0 0 9 8"><rect x="1" y=".5" width="7" height="7" rx=".8" fill="#fff" stroke="#9c9c9c"/><g stroke="#3a3a3a" stroke-width="1"><path d="M2.5 4 H6.5"/><path d="M4.5 2 V6"/></g></svg>
<span class="t" style="left:29.0px;top:648.6px;font-size:10.5px;line-height:12.5px;color:#1e1e1e;transform:scaleX(0.836);">Drafting Views (DETAILS ON PLANS)</span>
<div class="hl" style="left:19px;top:670px;width:8px"></div>
<svg class="bx" style="left:11px;top:666.5px" width="9" height="8" viewBox="0 0 9 8"><rect x="1" y=".5" width="7" height="7" rx=".8" fill="#fff" stroke="#9c9c9c"/><g stroke="#3a3a3a" stroke-width="1"><path d="M2.5 4 H6.5"/><path d="M4.5 2 V6"/></g></svg>
<span class="t" style="left:29.0px;top:662.8px;font-size:10.5px;line-height:12.5px;color:#1e1e1e;transform:scaleX(0.860);">Graphical Column Schedules</span>
</div>
<div id="sb"><svg style="position:absolute;left:3px;top:4.5px" width="7" height="5" viewBox="0 0 7 5"><path d="M.8 4.3 L3.5 1.2 L6.2 4.3" fill="none" stroke="#444" stroke-width="1.2"/></svg><div id="sbthumb"></div></div>
</div>
<div id="tabs">
<div id="tabact"></div>
<span class="ti" style="left:6.5px;top:3.3px"><svg width="13" height="13" viewBox="0 0 13 13"><rect x=".6" y=".6" width="11.8" height="11.8" rx=".8" fill="#f6f6f6" stroke="#8e8e8e" stroke-width="1.1"/><rect x="1.2" y="1.2" width="10.6" height="2.4" fill="#a9a9a9"/><path d="M2.3 5.3 h2 M2.3 9.3 h2 M5.5 6 h3 M5.5 8 h5 M5.5 10 h4 M9.8 4.8 v1.6" stroke="#9a9a9a" stroke-width="1.1"/></svg></span>
<span class="t" style="left:23.5px;top:4.2px;font-size:10.5px;line-height:12.5px;color:#2a2a2a;transform:scaleX(0.921);">intro page</span>
<span class="ti" style="left:105.5px;top:3.3px"><svg width="13" height="13" viewBox="0 0 13 13"><path d="M.6 1.6 L1.6 .6 H6.5 V1.4 H11 V4 H12.4 V11.4 L11.4 12.4 H1.6 L.6 11.4Z" fill="#d9d9d9" stroke="#9a9a9a" stroke-width="1"/><rect x="4" y="6.5" width="7" height="4.3" fill="#e4e4e4"/><path d="M2.5 3.3h1M5 3.3h1M7.5 3.3h1M2.5 5.2h1M5 5.2h1M7.5 5.2h1M9.8 5.2h1M2.5 7.2h1M2.5 9.2h1M2.5 11h1M5 8h.8M6.8 8h.8M8.6 8h.8M5 10h.8M6.8 10h.8M8.6 10h.8" stroke="#8a8a8a" stroke-width="1"/></svg></span>
<span class="t" style="left:123.5px;top:4.2px;font-size:10.5px;line-height:12.5px;color:#2a2a2a;transform:scaleX(0.816);">4TH FLOOR PT PLAN</span>
<span class="ti" style="left:231.5px;top:3.3px"><svg width="13" height="13" viewBox="0 0 13 13"><path d="M.6 1.6 L1.6 .6 H6.5 V1.4 H11 V4 H12.4 V11.4 L11.4 12.4 H1.6 L.6 11.4Z" fill="#d9d9d9" stroke="#9a9a9a" stroke-width="1"/><rect x="4" y="6.5" width="7" height="4.3" fill="#e4e4e4"/><path d="M2.5 3.3h1M5 3.3h1M7.5 3.3h1M2.5 5.2h1M5 5.2h1M7.5 5.2h1M9.8 5.2h1M2.5 7.2h1M2.5 9.2h1M2.5 11h1M5 8h.8M6.8 8h.8M8.6 8h.8M5 10h.8M6.8 10h.8M8.6 10h.8" stroke="#8a8a8a" stroke-width="1"/></svg></span>
<span class="t" style="left:249.5px;top:4.2px;font-size:10.5px;line-height:12.5px;color:#2a2a2a;transform:scaleX(0.833);">3RD &amp; 5TH FLOOR PT PLAN</span>
<span class="ti" style="left:387.5px;top:3.3px"><svg width="13" height="13" viewBox="0 0 13 13"><path d="M.6 1.6 L1.6 .6 H6.5 V1.4 H11 V4 H12.4 V11.4 L11.4 12.4 H1.6 L.6 11.4Z" fill="#d9d9d9" stroke="#9a9a9a" stroke-width="1"/><rect x="4" y="6.5" width="7" height="4.3" fill="#e4e4e4"/><path d="M2.5 3.3h1M5 3.3h1M7.5 3.3h1M2.5 5.2h1M5 5.2h1M7.5 5.2h1M9.8 5.2h1M2.5 7.2h1M2.5 9.2h1M2.5 11h1M5 8h.8M6.8 8h.8M8.6 8h.8M5 10h.8M6.8 10h.8M8.6 10h.8" stroke="#8a8a8a" stroke-width="1"/></svg></span>
<span class="t" style="left:405.5px;top:4.2px;font-size:10.5px;line-height:12.5px;color:#2a2a2a;transform:scaleX(0.820);">ROOF PT PLAN</span>
<span class="ti" style="left:489.5px;top:3.3px"><svg width="13" height="13" viewBox="0 0 13 13"><path d="M.6 1.6 L1.6 .6 H6.5 V1.4 H11 V4 H12.4 V11.4 L11.4 12.4 H1.6 L.6 11.4Z" fill="#d9d9d9" stroke="#9a9a9a" stroke-width="1"/><rect x="4" y="6.5" width="7" height="4.3" fill="#e4e4e4"/><path d="M2.5 3.3h1M5 3.3h1M7.5 3.3h1M2.5 5.2h1M5 5.2h1M7.5 5.2h1M9.8 5.2h1M2.5 7.2h1M2.5 9.2h1M2.5 11h1M5 8h.8M6.8 8h.8M8.6 8h.8M5 10h.8M6.8 10h.8M8.6 10h.8" stroke="#8a8a8a" stroke-width="1"/></svg></span>
<span class="t" style="left:508.5px;top:4.2px;font-size:10.5px;line-height:12.5px;color:#2a2a2a;transform:scaleX(0.802);">ROOF REBAR PLAN</span>
<span class="ti" style="left:609.5px;top:3.3px"><svg width="13" height="13" viewBox="0 0 13 13"><rect x="3.6" y="6.8" width="6.2" height="5" fill="#f4f4f4" stroke="#8e8e8e" stroke-width="1.2"/><path d="M6.7 1.2 L12.4 7.2 H1Z" fill="#8a8a8a"/></svg></span>
<span class="t" style="left:628.5px;top:4.2px;font-size:10.5px;line-height:12.5px;color:#2a2a2a;transform:scaleX(0.809);">East</span>
<span class="ti" style="left:710.5px;top:3.3px"><svg width="13" height="13" viewBox="0 0 13 13"><path d="M.6 1.6 L1.6 .6 H6.5 V1.4 H11 V4 H12.4 V11.4 L11.4 12.4 H1.6 L.6 11.4Z" fill="#d9d9d9" stroke="#9a9a9a" stroke-width="1"/><rect x="4" y="6.5" width="7" height="4.3" fill="#e4e4e4"/><path d="M2.5 3.3h1M5 3.3h1M7.5 3.3h1M2.5 5.2h1M5 5.2h1M7.5 5.2h1M9.8 5.2h1M2.5 7.2h1M2.5 9.2h1M2.5 11h1M5 8h.8M6.8 8h.8M8.6 8h.8M5 10h.8M6.8 10h.8M8.6 10h.8" stroke="#8a8a8a" stroke-width="1"/></svg></span>
<span class="t" style="left:728.5px;top:4.2px;font-size:10.5px;line-height:12.5px;color:#2a2a2a;transform:scaleX(0.803);">1ST FLOOR PT PLAN</span>
<span class="ti" style="left:833.5px;top:3.3px"><svg width="13" height="13" viewBox="0 0 13 13"><path d="M5 1.6 L7.2 1.8 L12.2 6.2 L7.2 10.8 L5 11Z" fill="#2e2e2e"/><circle cx="5.6" cy="6.3" r="3.3" fill="#f4f4f4" stroke="#2e2e2e" stroke-width="1.2"/><path d="M5.6 9.6 V12" stroke="#2e2e2e" stroke-width="1"/></svg></span>
<span class="t" style="left:853.3px;top:5.1px;font-size:10.2px;line-height:12.2px;color:#111;transform:scaleX(0.896);font-weight:bold;">Section 11</span>
<svg style="position:absolute;left:919.0999999999999px;top:5.8px" width="9" height="9" viewBox="0 0 9 9"><path d="M1 1 L8 8 M8 1 L1 8" stroke="#222" stroke-width="1.5"/></svg>
</div>
<div id="wl"></div>
<div id="canvas">
<svg style="position:absolute;left:0;top:0;will-change:transform" width="1069" height="670" viewBox="211 129 1069 670" font-family="Liberation Sans, sans-serif" fill="none">
<path d="M455.0 204.5L1207.0 204.5" stroke="#a2a2a2" stroke-width="1.12" stroke-dasharray="7 2 1.5 2"/>
<path d="M455.0 235.5L1207.0 235.5" stroke="#a2a2a2" stroke-width="1.12" stroke-dasharray="7 2 1.5 2"/>
<path d="M455.0 266.5L1207.0 266.5" stroke="#a2a2a2" stroke-width="1.12" stroke-dasharray="7 2 1.5 2"/>
<path d="M455.0 313.5L1207.0 313.5" stroke="#a2a2a2" stroke-width="1.12" stroke-dasharray="7 2 1.5 2"/>
<path d="M455.0 353.5L1207.0 353.5" stroke="#a2a2a2" stroke-width="1.12" stroke-dasharray="7 2 1.5 2"/>
<path d="M455.0 393.5L1207.0 393.5" stroke="#a2a2a2" stroke-width="1.12" stroke-dasharray="7 2 1.5 2"/>
<path d="M455.0 431.5L1207.0 431.5" stroke="#a2a2a2" stroke-width="1.12" stroke-dasharray="7 2 1.5 2"/>
<path d="M455.0 469.5L1207.0 469.5" stroke="#a2a2a2" stroke-width="1.12" stroke-dasharray="7 2 1.5 2"/>
<path d="M455.0 506.5L1207.0 506.5" stroke="#a2a2a2" stroke-width="1.12" stroke-dasharray="7 2 1.5 2"/>
<path d="M455.0 543.5L1207.0 543.5" stroke="#a2a2a2" stroke-width="1.12" stroke-dasharray="7 2 1.5 2"/>
<path d="M455.0 549.5L1207.0 549.5" stroke="#a2a2a2" stroke-width="1.12" stroke-dasharray="7 2 1.5 2"/>
<path d="M455.0 580.5L1207.0 580.5" stroke="#a2a2a2" stroke-width="1.12" stroke-dasharray="7 2 1.5 2"/>
<path d="M455.0 596.5L1207.0 596.5" stroke="#a2a2a2" stroke-width="1.12" stroke-dasharray="7 2 1.5 2"/>
<path d="M455.0 633.5L1207.0 633.5" stroke="#a2a2a2" stroke-width="1.12" stroke-dasharray="7 2 1.5 2"/>
<path d="M455.0 638.5L1207.0 638.5" stroke="#a2a2a2" stroke-width="1.12" stroke-dasharray="7 2 1.5 2"/>
<path d="M455.0 652.5L1207.0 652.5" stroke="#a2a2a2" stroke-width="1.12" stroke-dasharray="7 2 1.5 2"/>
<path d="M525.5 176.0L525.5 660.0" stroke="#a2a2a2" stroke-width="1.12" stroke-dasharray="7 2 1.5 2"/>
<path d="M555.5 176.5L555.5 660.0" stroke="#a2a2a2" stroke-width="1.12" stroke-dasharray="7 2 1.5 2"/>
<path d="M579.5 176.0L579.5 665.0" stroke="#a2a2a2" stroke-width="1.12" stroke-dasharray="7 2 1.5 2"/>
<path d="M652.5 176.0L652.5 660.0" stroke="#a2a2a2" stroke-width="1.12" stroke-dasharray="7 2 1.5 2"/>
<path d="M724.5 176.0L724.5 660.0" stroke="#a2a2a2" stroke-width="1.12" stroke-dasharray="7 2 1.5 2"/>
<path d="M801.5 176.0L801.5 660.0" stroke="#a2a2a2" stroke-width="1.12" stroke-dasharray="7 2 1.5 2"/>
<path d="M898.5 176.0L898.5 612.0" stroke="#a2a2a2" stroke-width="1.12" stroke-dasharray="7 2 1.5 2"/>
<path d="M977.5 176.0L977.5 660.0" stroke="#a2a2a2" stroke-width="1.12" stroke-dasharray="7 2 1.5 2"/>
<path d="M1056.5 183.7L1056.5 660.0" stroke="#a2a2a2" stroke-width="1.12" stroke-dasharray="7 2 1.5 2"/>
<path d="M1133.5 176.0L1133.5 660.0" stroke="#a2a2a2" stroke-width="1.12" stroke-dasharray="7 2 1.5 2"/>
<path d="M1183.5 176.0L1183.5 660.0" stroke="#a2a2a2" stroke-width="1.12" stroke-dasharray="7 2 1.5 2"/>
<path d="M792.3 264.4V245.2H1061V264.4" fill="none" stroke="#e6e6e6" stroke-width="1.25"/>
<path d="M837.5 245.2L837.5 270.5" stroke="#e6e6e6" stroke-width="1.25" />
<circle cx="837.7" cy="271.5" r="1.5" fill="none" stroke="#e6e6e6" stroke-width=".9"/>
<path d="M1039.5 245.2L1039.5 265.5" stroke="#e6e6e6" stroke-width="1.25" />
<rect x="1038.5" y="265.5" width="3.0" height="3.0" fill="none" stroke="#e6e6e6" stroke-width="1.12" />
<path d="M928.5 237.5L928.5 581.0" stroke="#e6e6e6" stroke-width="1.25" />
<path d="M745.0 264.5L1113.0 264.5" stroke="#e6e6e6" stroke-width="1.25" />
<path d="M743.8 268V264.2a1.3 1.3 0 0 1 2.6 0V268" fill="none" stroke="#e6e6e6" stroke-width=".9"/>
<path d="M1111.8 268V263a1.3 1.3 0 0 1 2.6 0V268" fill="none" stroke="#e6e6e6" stroke-width=".9"/>
<path d="M701.3 267L928.5 277.3L1157 267V270.6L928.5 279.8L701.3 270.8Z" fill="none" stroke="#e6e6e6" stroke-width="1.25"/>
<path d="M701.3 267.6L745 268.6L915 276.4" fill="none" stroke="#e6e6e6" stroke-width=".8"/>
<rect x="925.5" y="270.5" width="7.0" height="7.0" fill="none" stroke="#e6e6e6" stroke-width="1.12" />
<path d="M722.5 271.1L722.5 612.0" stroke="#e6e6e6" stroke-width="1.25" />
<path d="M725.5 271.2L725.5 612.0" stroke="#e6e6e6" stroke-width="1.25" />
<path d="M799.5 274.3L799.5 612.0" stroke="#e6e6e6" stroke-width="1.25" />
<path d="M803.5 274.4L803.5 612.0" stroke="#e6e6e6" stroke-width="1.25" />
<path d="M878.5 277.5L878.5 612.0" stroke="#e6e6e6" stroke-width="1.25" />
<path d="M882.5 277.7L882.5 612.0" stroke="#e6e6e6" stroke-width="1.25" />
<path d="M976.5 277.6L976.5 612.0" stroke="#e6e6e6" stroke-width="1.25" />
<path d="M979.5 277.5L979.5 612.0" stroke="#e6e6e6" stroke-width="1.25" />
<path d="M1054.5 274.3L1054.5 612.0" stroke="#e6e6e6" stroke-width="1.25" />
<path d="M1058.5 274.2L1058.5 612.0" stroke="#e6e6e6" stroke-width="1.25" />
<path d="M1132.5 271.0L1132.5 612.0" stroke="#e6e6e6" stroke-width="1.25" />
<path d="M1135.5 270.9L1135.5 612.0" stroke="#e6e6e6" stroke-width="1.25" />
<path d="M1056.5 274.2L1056.5 612.0" stroke="#e6e6e6" stroke-width="1.0" />
<path d="M882.5 393.0L882.5 581.0" stroke="#f4f4f4" stroke-width="2.0" stroke-dasharray="9 2"/>
<path d="M804.0 434.5L878.0 434.5" stroke="#bbb" stroke-width="1.25" stroke-dasharray="1 1.5"/>
<path d="M804.0 472.5L878.0 472.5" stroke="#bbb" stroke-width="1.25" stroke-dasharray="1 1.5"/>
<path d="M701.5 313.5H1157L1154.5 316.5H701.5Z" fill="none" stroke="#e6e6e6" stroke-width="1.25"/>
<path d="M701.5 353.5H1157L1154.5 355.5H701.5Z" fill="none" stroke="#e6e6e6" stroke-width="1.25"/>
<path d="M701.5 393.5H1157L1154.5 395.5H701.5Z" fill="none" stroke="#e6e6e6" stroke-width="1.25"/>
<path d="M701.5 431.5H1157L1154.5 434.5H701.5Z" fill="none" stroke="#e6e6e6" stroke-width="1.25"/>
<path d="M701.5 469.5H1157L1154.5 471.5H701.5Z" fill="none" stroke="#e6e6e6" stroke-width="1.25"/>
<path d="M701.5 506.5H1157L1154.5 509.5H701.5Z" fill="none" stroke="#e6e6e6" stroke-width="1.25"/>
<path d="M701.5 543.5H1157L1154.5 546.5H701.5Z" fill="none" stroke="#e6e6e6" stroke-width="1.25"/>
<path d="M731.5 313.4V279.5H754.5V313.4" fill="none" stroke="#e6e6e6" stroke-width="1.25"/>
<path d="M768.5 313.4V279.5H791.5V313.4" fill="none" stroke="#e6e6e6" stroke-width="1.25"/>
<path d="M820.5 313.4V279.5H843.5V313.4" fill="none" stroke="#e6e6e6" stroke-width="1.25"/>
<path d="M891.5 313.4V279.5H914.5V313.4" fill="none" stroke="#e6e6e6" stroke-width="1.25"/>
<path d="M943.5 313.4V279.5H966.5V313.4" fill="none" stroke="#e6e6e6" stroke-width="1.25"/>
<path d="M1017.5 313.4V279.5H1051.5V313.4" fill="none" stroke="#e6e6e6" stroke-width="1.25"/>
<path d="M1061.5 313.4V279.5H1095.5V313.4" fill="none" stroke="#e6e6e6" stroke-width="1.25"/>
<path d="M731.5 352.6V317.5H754.5V352.6" fill="none" stroke="#e6e6e6" stroke-width="1.25"/>
<path d="M768.5 352.6V317.5H791.5V352.6" fill="none" stroke="#e6e6e6" stroke-width="1.25"/>
<path d="M768.5 319.5L791.6 319.5" stroke="#e6e6e6" stroke-width="1.0" />
<path d="M820.5 352.6V317.5H843.5V352.6" fill="none" stroke="#e6e6e6" stroke-width="1.25"/>
<path d="M891.5 352.6V317.5H914.5V352.6" fill="none" stroke="#e6e6e6" stroke-width="1.25"/>
<path d="M891.6 319.5L914.6 319.5" stroke="#e6e6e6" stroke-width="1.0" />
<path d="M943.5 352.6V317.5H966.5V352.6" fill="none" stroke="#e6e6e6" stroke-width="1.25"/>
<path d="M1017.5 352.6V317.5H1051.5V352.6" fill="none" stroke="#e6e6e6" stroke-width="1.25"/>
<path d="M1017.0 319.5L1051.8 319.5" stroke="#e6e6e6" stroke-width="1.0" />
<path d="M1061.5 352.6V317.5H1095.5V352.6" fill="none" stroke="#e6e6e6" stroke-width="1.25"/>
<path d="M725.8 350.5L731.6 350.5" stroke="#e6e6e6" stroke-width="1.0" />
<path d="M754.6 350.5L768.5 350.5" stroke="#e6e6e6" stroke-width="1.0" />
<path d="M791.6 350.5L799.4 350.5" stroke="#e6e6e6" stroke-width="1.0" />
<path d="M803.6 350.5L820.3 350.5" stroke="#e6e6e6" stroke-width="1.0" />
<path d="M843.5 350.5L878.5 350.5" stroke="#e6e6e6" stroke-width="1.0" />
<path d="M914.6 350.5L928.5 350.5" stroke="#e6e6e6" stroke-width="1.0" />
<path d="M966.5 350.5L976.0 350.5" stroke="#e6e6e6" stroke-width="1.0" />
<path d="M979.3 350.5L1017.0 350.5" stroke="#e6e6e6" stroke-width="1.0" />
<path d="M1095.6 350.5L1132.3 350.5" stroke="#e6e6e6" stroke-width="1.0" />
<path d="M731.5 392.6V356.5H754.5V392.6" fill="none" stroke="#e6e6e6" stroke-width="1.25"/>
<path d="M731.6 358.5L754.6 358.5" stroke="#e6e6e6" stroke-width="1.0" />
<path d="M768.5 392.6V356.5H791.5V392.6" fill="none" stroke="#e6e6e6" stroke-width="1.25"/>
<path d="M820.5 392.6V356.5H843.5V392.6" fill="none" stroke="#e6e6e6" stroke-width="1.25"/>
<path d="M820.3 358.5L843.5 358.5" stroke="#e6e6e6" stroke-width="1.0" />
<path d="M891.5 392.6V356.5H914.5V392.6" fill="none" stroke="#e6e6e6" stroke-width="1.25"/>
<path d="M943.5 392.6V356.5H966.5V392.6" fill="none" stroke="#e6e6e6" stroke-width="1.25"/>
<path d="M943.4 358.5L966.5 358.5" stroke="#e6e6e6" stroke-width="1.0" />
<path d="M1017.5 392.6V356.5H1051.5V392.6" fill="none" stroke="#e6e6e6" stroke-width="1.25"/>
<path d="M1061.5 392.6V356.5H1095.5V392.6" fill="none" stroke="#e6e6e6" stroke-width="1.25"/>
<path d="M1061.0 358.5L1095.6 358.5" stroke="#e6e6e6" stroke-width="1.0" />
<path d="M725.8 390.5L731.6 390.5" stroke="#e6e6e6" stroke-width="1.0" />
<path d="M754.6 390.5L768.5 390.5" stroke="#e6e6e6" stroke-width="1.0" />
<path d="M791.6 390.5L799.4 390.5" stroke="#e6e6e6" stroke-width="1.0" />
<path d="M803.6 390.5L820.3 390.5" stroke="#e6e6e6" stroke-width="1.0" />
<path d="M843.5 390.5L878.5 390.5" stroke="#e6e6e6" stroke-width="1.0" />
<path d="M914.6 390.5L928.5 390.5" stroke="#e6e6e6" stroke-width="1.0" />
<path d="M966.5 390.5L976.0 390.5" stroke="#e6e6e6" stroke-width="1.0" />
<path d="M979.3 390.5L1017.0 390.5" stroke="#e6e6e6" stroke-width="1.0" />
<path d="M1095.6 390.5L1132.3 390.5" stroke="#e6e6e6" stroke-width="1.0" />
<path d="M731.5 431.4V396.5H754.5V431.4" fill="none" stroke="#e6e6e6" stroke-width="1.25"/>
<path d="M768.5 431.4V396.5H791.5V431.4" fill="none" stroke="#e6e6e6" stroke-width="1.25"/>
<path d="M768.5 398.5L791.6 398.5" stroke="#e6e6e6" stroke-width="1.0" />
<path d="M820.5 431.4V396.5H843.5V431.4" fill="none" stroke="#e6e6e6" stroke-width="1.25"/>
<path d="M891.5 431.4V396.5H914.5V431.4" fill="none" stroke="#e6e6e6" stroke-width="1.25"/>
<path d="M891.6 398.5L914.6 398.5" stroke="#e6e6e6" stroke-width="1.0" />
<path d="M943.5 431.4V396.5H966.5V431.4" fill="none" stroke="#e6e6e6" stroke-width="1.25"/>
<path d="M1017.5 431.4V396.5H1051.5V431.4" fill="none" stroke="#e6e6e6" stroke-width="1.25"/>
<path d="M1017.0 398.5L1051.8 398.5" stroke="#e6e6e6" stroke-width="1.0" />
<path d="M1061.5 431.4V396.5H1095.5V431.4" fill="none" stroke="#e6e6e6" stroke-width="1.25"/>
<path d="M725.8 429.5L731.6 429.5" stroke="#e6e6e6" stroke-width="1.0" />
<path d="M754.6 429.5L768.5 429.5" stroke="#e6e6e6" stroke-width="1.0" />
<path d="M791.6 429.5L799.4 429.5" stroke="#e6e6e6" stroke-width="1.0" />
<path d="M803.6 429.5L820.3 429.5" stroke="#e6e6e6" stroke-width="1.0" />
<path d="M843.5 429.5L878.5 429.5" stroke="#e6e6e6" stroke-width="1.0" />
<path d="M914.6 429.5L928.5 429.5" stroke="#e6e6e6" stroke-width="1.0" />
<path d="M966.5 429.5L976.0 429.5" stroke="#e6e6e6" stroke-width="1.0" />
<path d="M979.3 429.5L1017.0 429.5" stroke="#e6e6e6" stroke-width="1.0" />
<path d="M1095.6 429.5L1132.3 429.5" stroke="#e6e6e6" stroke-width="1.0" />
<path d="M731.5 468.9V435.5H754.5V468.9" fill="none" stroke="#e6e6e6" stroke-width="1.25"/>
<path d="M731.6 437.5L754.6 437.5" stroke="#e6e6e6" stroke-width="1.0" />
<path d="M768.5 468.9V435.5H791.5V468.9" fill="none" stroke="#e6e6e6" stroke-width="1.25"/>
<path d="M820.5 468.9V435.5H843.5V468.9" fill="none" stroke="#e6e6e6" stroke-width="1.25"/>
<path d="M820.3 437.5L843.5 437.5" stroke="#e6e6e6" stroke-width="1.0" />
<path d="M891.5 468.9V435.5H914.5V468.9" fill="none" stroke="#e6e6e6" stroke-width="1.25"/>
<path d="M943.5 468.9V435.5H966.5V468.9" fill="none" stroke="#e6e6e6" stroke-width="1.25"/>
<path d="M943.4 437.5L966.5 437.5" stroke="#e6e6e6" stroke-width="1.0" />
<path d="M1017.5 468.9V435.5H1051.5V468.9" fill="none" stroke="#e6e6e6" stroke-width="1.25"/>
<path d="M1061.5 468.9V435.5H1095.5V468.9" fill="none" stroke="#e6e6e6" stroke-width="1.25"/>
<path d="M1061.0 437.5L1095.6 437.5" stroke="#e6e6e6" stroke-width="1.0" />
<path d="M725.8 466.5L731.6 466.5" stroke="#e6e6e6" stroke-width="1.0" />
<path d="M754.6 466.5L768.5 466.5" stroke="#e6e6e6" stroke-width="1.0" />
<path d="M791.6 466.5L799.4 466.5" stroke="#e6e6e6" stroke-width="1.0" />
<path d="M803.6 466.5L820.3 466.5" stroke="#e6e6e6" stroke-width="1.0" />
<path d="M843.5 466.5L878.5 466.5" stroke="#e6e6e6" stroke-width="1.0" />
<path d="M914.6 466.5L928.5 466.5" stroke="#e6e6e6" stroke-width="1.0" />
<path d="M966.5 466.5L976.0 466.5" stroke="#e6e6e6" stroke-width="1.0" />
<path d="M979.3 466.5L1017.0 466.5" stroke="#e6e6e6" stroke-width="1.0" />
<path d="M1095.6 466.5L1132.3 466.5" stroke="#e6e6e6" stroke-width="1.0" />
<path d="M731.5 506.1V472.5H754.5V506.1" fill="none" stroke="#e6e6e6" stroke-width="1.25"/>
<path d="M768.5 506.1V472.5H791.5V506.1" fill="none" stroke="#e6e6e6" stroke-width="1.25"/>
<path d="M768.5 474.5L791.6 474.5" stroke="#e6e6e6" stroke-width="1.0" />
<path d="M820.5 506.1V472.5H843.5V506.1" fill="none" stroke="#e6e6e6" stroke-width="1.25"/>
<path d="M891.5 506.1V472.5H914.5V506.1" fill="none" stroke="#e6e6e6" stroke-width="1.25"/>
<path d="M891.6 474.5L914.6 474.5" stroke="#e6e6e6" stroke-width="1.0" />
<path d="M943.5 506.1V472.5H966.5V506.1" fill="none" stroke="#e6e6e6" stroke-width="1.25"/>
<path d="M1017.5 506.1V472.5H1051.5V506.1" fill="none" stroke="#e6e6e6" stroke-width="1.25"/>
<path d="M1017.0 474.5L1051.8 474.5" stroke="#e6e6e6" stroke-width="1.0" />
<path d="M1061.5 506.1V472.5H1095.5V506.1" fill="none" stroke="#e6e6e6" stroke-width="1.25"/>
<path d="M725.8 504.5L731.6 504.5" stroke="#e6e6e6" stroke-width="1.0" />
<path d="M754.6 504.5L768.5 504.5" stroke="#e6e6e6" stroke-width="1.0" />
<path d="M791.6 504.5L799.4 504.5" stroke="#e6e6e6" stroke-width="1.0" />
<path d="M803.6 504.5L820.3 504.5" stroke="#e6e6e6" stroke-width="1.0" />
<path d="M843.5 504.5L878.5 504.5" stroke="#e6e6e6" stroke-width="1.0" />
<path d="M914.6 504.5L928.5 504.5" stroke="#e6e6e6" stroke-width="1.0" />
<path d="M966.5 504.5L976.0 504.5" stroke="#e6e6e6" stroke-width="1.0" />
<path d="M979.3 504.5L1017.0 504.5" stroke="#e6e6e6" stroke-width="1.0" />
<path d="M1095.6 504.5L1132.3 504.5" stroke="#e6e6e6" stroke-width="1.0" />
<path d="M731.5 543.4V510.5H754.5V543.4" fill="none" stroke="#e6e6e6" stroke-width="1.25"/>
<path d="M731.6 511.5L754.6 511.5" stroke="#e6e6e6" stroke-width="1.0" />
<path d="M768.5 543.4V510.5H791.5V543.4" fill="none" stroke="#e6e6e6" stroke-width="1.25"/>
<path d="M820.5 543.4V510.5H843.5V543.4" fill="none" stroke="#e6e6e6" stroke-width="1.25"/>
<path d="M820.3 511.5L843.5 511.5" stroke="#e6e6e6" stroke-width="1.0" />
<path d="M891.5 543.4V510.5H914.5V543.4" fill="none" stroke="#e6e6e6" stroke-width="1.25"/>
<path d="M943.5 543.4V510.5H966.5V543.4" fill="none" stroke="#e6e6e6" stroke-width="1.25"/>
<path d="M943.4 511.5L966.5 511.5" stroke="#e6e6e6" stroke-width="1.0" />
<path d="M1017.5 543.4V510.5H1051.5V543.4" fill="none" stroke="#e6e6e6" stroke-width="1.25"/>
<path d="M1061.5 543.4V510.5H1095.5V543.4" fill="none" stroke="#e6e6e6" stroke-width="1.25"/>
<path d="M1061.0 511.5L1095.6 511.5" stroke="#e6e6e6" stroke-width="1.0" />
<path d="M725.8 541.5L731.6 541.5" stroke="#e6e6e6" stroke-width="1.0" />
<path d="M754.6 541.5L768.5 541.5" stroke="#e6e6e6" stroke-width="1.0" />
<path d="M791.6 541.5L799.4 541.5" stroke="#e6e6e6" stroke-width="1.0" />
<path d="M803.6 541.5L820.3 541.5" stroke="#e6e6e6" stroke-width="1.0" />
<path d="M843.5 541.5L878.5 541.5" stroke="#e6e6e6" stroke-width="1.0" />
<path d="M914.6 541.5L928.5 541.5" stroke="#e6e6e6" stroke-width="1.0" />
<path d="M966.5 541.5L976.0 541.5" stroke="#e6e6e6" stroke-width="1.0" />
<path d="M979.3 541.5L1017.0 541.5" stroke="#e6e6e6" stroke-width="1.0" />
<path d="M1095.6 541.5L1132.3 541.5" stroke="#e6e6e6" stroke-width="1.0" />
<path d="M1116.5 393.0L1116.5 581.0" stroke="#dcdcdc" stroke-width="2.5" stroke-dasharray="5.5 2"/>
<path d="M1119.5 393.0L1119.5 581.0" stroke="#777" stroke-width="1.0" stroke-dasharray="5.5 2"/>
<path d="M731.5 580V549.5M754.5 549.5V580" fill="none" stroke="#e6e6e6" stroke-width="1.25"/>
<path d="M768.5 580V549.5M791.5 549.5V580" fill="none" stroke="#e6e6e6" stroke-width="1.25"/>
<path d="M820.5 580V549.5M843.5 549.5V580" fill="none" stroke="#e6e6e6" stroke-width="1.25"/>
<path d="M891.5 580V549.5M914.5 549.5V580" fill="none" stroke="#e6e6e6" stroke-width="1.25"/>
<path d="M943.5 580V549.5M966.5 549.5V580" fill="none" stroke="#e6e6e6" stroke-width="1.25"/>
<path d="M1017.5 580V549.5M1051.5 549.5V580" fill="none" stroke="#e6e6e6" stroke-width="1.25"/>
<path d="M1061.5 580V549.5M1095.5 549.5V580" fill="none" stroke="#e6e6e6" stroke-width="1.25"/>
<path d="M630.0 569.5L1180.4 569.5" stroke="#e6e6e6" stroke-width="1.25" />
<path d="M630.0 570.5L1180.4 570.5" stroke="#8a8a8a" stroke-width="1.0" />
<path d="M1180.5 569.3L1180.5 641.6" stroke="#e6e6e6" stroke-width="1.25" />
<path d="M1184.5 569.3L1184.5 641.6" stroke="#e6e6e6" stroke-width="1.25" />
<path d="M1182.5 569.3L1182.5 641.6" stroke="#9a9a9a" stroke-width="1.0" stroke-dasharray="2 1.5"/>
<path d="M525.0 581.5L1184.0 581.5" stroke="#e6e6e6" stroke-width="1.25" />
<path d="M525.0 583.5L1184.0 583.5" stroke="#e6e6e6" stroke-width="1.5" stroke-dasharray="1.5 1.5"/>
<path d="M525.0 586.5L852.0 586.5" stroke="#e6e6e6" stroke-width="1.25" stroke-dasharray="6 2.5"/>
<path d="M852.0 585.5L1184.0 585.5" stroke="#e6e6e6" stroke-width="1.25" />
<path d="M525.0 596.5L1184.0 596.5" stroke="#e6e6e6" stroke-width="1.12" />
<path d="M525.0 598.5L1184.0 598.5" stroke="#e6e6e6" stroke-width="1.25" />
<path d="M554 597V549.8H653.2V640" fill="none" stroke="#e6e6e6" stroke-width="1.25"/>
<path d="M650.5 549.8L650.5 640.0" stroke="#e6e6e6" stroke-width="1.25" />
<path d="M556.5 597V554.5H629.5" fill="none" stroke="#f2f2f2" stroke-width="1.6" stroke-dasharray="4 1.5"/>
<path d="M629.5 552.0L629.5 581.0" stroke="#e6e6e6" stroke-width="1.25" />
<path d="M629.5 581.0L629.5 597.0" stroke="#e6e6e6" stroke-width="1.25" stroke-dasharray="3 2"/>
<path d="M629.5 552.5L650.6 552.5" stroke="#e6e6e6" stroke-width="1.0" />
<path d="M523.8 640V566.4H538V580" fill="none" stroke="#e6e6e6" stroke-width="1.25"/>
<path d="M538.0 569.5L554.0 569.5" stroke="#e6e6e6" stroke-width="1.0" />
<path d="M526.5 566.4L526.5 598.0" stroke="#e6e6e6" stroke-width="1.0" />
<path d="M557.0 607.5L1180.0 607.5" stroke="#e6e6e6" stroke-width="1.25" />
<path d="M554.5 598.8L554.5 640.0" stroke="#e6e6e6" stroke-width="1.25" />
<path d="M557.5 598.8L557.5 640.0" stroke="#e6e6e6" stroke-width="1.0" />
<path d="M524.6 606.5L554.0 606.5" stroke="#e6e6e6" stroke-width="1.5" stroke-dasharray="4 1.5"/>
<rect x="525.6" y="611.0" width="15.9" height="27.0" fill="#fff"/>
<rect x="541.5" y="633.0" width="12.5" height="5.0" fill="#fff"/>
<path d="M542.0 612.5L551.5 612.5" stroke="#e6e6e6" stroke-width="1.38" />
<path d="M542.0 614.5L551.5 614.5" stroke="#e6e6e6" stroke-width="1.38" />
<path d="M542.0 617.5L551.5 617.5" stroke="#e6e6e6" stroke-width="1.38" />
<path d="M542.0 619.5L551.5 619.5" stroke="#e6e6e6" stroke-width="1.38" />
<path d="M542.0 622.5L551.5 622.5" stroke="#e6e6e6" stroke-width="1.38" />
<path d="M542.0 624.5L551.5 624.5" stroke="#e6e6e6" stroke-width="1.38" />
<path d="M542.0 626.5L551.5 626.5" stroke="#e6e6e6" stroke-width="1.38" />
<path d="M542.0 629.5L551.5 629.5" stroke="#e6e6e6" stroke-width="1.38" />
<path d="M542.0 631.5L551.5 631.5" stroke="#e6e6e6" stroke-width="1.38" />
<path d="M551.5 611.0L551.5 633.0" stroke="#e6e6e6" stroke-width="1.0" />
<rect x="601.4" y="606.4" width="15.0" height="32.2" fill="#fff"/>
<rect x="648.5" y="606.5" width="8.0" height="32.0" fill="none" stroke="#e6e6e6" stroke-width="1.25" />
<path d="M652.5 606.0L652.5 638.0" stroke="#ddd" stroke-width="2.0" stroke-dasharray="3 2"/>
<path d="M672.5 607.4L672.5 633.0" stroke="#e6e6e6" stroke-width="1.0" />
<rect x="721.5" y="606.5" width="7.0" height="32.0" fill="none" stroke="#e6e6e6" stroke-width="1.25" />
<path d="M725.5 606.0L725.5 638.0" stroke="#ddd" stroke-width="2.0" stroke-dasharray="3 2"/>
<rect x="792.0" y="606.4" width="20.5" height="32.2" fill="#fff"/>
<path d="M801.5 600.0L801.5 638.0" stroke="#333" stroke-width="1.25" stroke-dasharray="3 2"/>
<rect x="875.0" y="606.4" width="7.8" height="32.2" fill="#fff"/>
<rect x="882.5" y="606.5" width="14.0" height="30.0" fill="none" stroke="#e6e6e6" stroke-width="1.25" />
<rect x="900.0" y="606.4" width="280.4" height="4.4" fill="#fff"/>
<rect x="899.6" y="606.4" width="3.4" height="32.2" fill="#fff"/>
<rect x="966.8" y="606.4" width="21.5" height="32.2" fill="#fff"/>
<path d="M977.5 600.0L977.5 638.0" stroke="#333" stroke-width="1.25" stroke-dasharray="3 2"/>
<rect x="1050.5" y="606.4" width="16.5" height="32.2" fill="#fff"/>
<path d="M1056.5 600.0L1056.5 638.0" stroke="#333" stroke-width="1.25" stroke-dasharray="3 2"/>
<rect x="1129.0" y="606.4" width="7.8" height="32.2" fill="#fff"/>
<rect x="1146.8" y="610.7" width="33.6" height="27.9" fill="#fff"/>
<rect x="1136.8" y="632.8" width="10.2" height="5.8" fill="#fff"/>
<path d="M1137.0 615.5L1146.8 615.5" stroke="#e6e6e6" stroke-width="1.0" />
<path d="M1137.0 620.5L1146.8 620.5" stroke="#e6e6e6" stroke-width="1.0" />
<path d="M1147.0 619.5L1180.0 619.5" stroke="#aaa" stroke-width="1.0" stroke-dasharray="1.5 1.5"/>
<path d="M650.5 583.0L650.5 606.0" stroke="#e6e6e6" stroke-width="1.25" stroke-dasharray="2 1.2"/>
<path d="M653.5 583.0L653.5 606.0" stroke="#e6e6e6" stroke-width="1.25" stroke-dasharray="2 1.2"/>
<path d="M723.5 583.0L723.5 606.0" stroke="#e6e6e6" stroke-width="1.25" stroke-dasharray="2 1.2"/>
<path d="M726.5 583.0L726.5 606.0" stroke="#e6e6e6" stroke-width="1.25" stroke-dasharray="2 1.2"/>
<path d="M799.5 583.0L799.5 606.0" stroke="#e6e6e6" stroke-width="1.25" stroke-dasharray="2 1.2"/>
<path d="M803.5 583.0L803.5 606.0" stroke="#e6e6e6" stroke-width="1.25" stroke-dasharray="2 1.2"/>
<path d="M880.5 583.0L880.5 606.0" stroke="#e6e6e6" stroke-width="1.25" stroke-dasharray="2 1.2"/>
<path d="M883.5 583.0L883.5 606.0" stroke="#e6e6e6" stroke-width="1.25" stroke-dasharray="2 1.2"/>
<path d="M896.5 583.0L896.5 606.0" stroke="#e6e6e6" stroke-width="1.25" stroke-dasharray="2 1.2"/>
<path d="M900.5 583.0L900.5 606.0" stroke="#e6e6e6" stroke-width="1.25" stroke-dasharray="2 1.2"/>
<path d="M975.5 583.0L975.5 606.0" stroke="#e6e6e6" stroke-width="1.25" stroke-dasharray="2 1.2"/>
<path d="M979.5 583.0L979.5 606.0" stroke="#e6e6e6" stroke-width="1.25" stroke-dasharray="2 1.2"/>
<path d="M1054.5 583.0L1054.5 606.0" stroke="#e6e6e6" stroke-width="1.25" stroke-dasharray="2 1.2"/>
<path d="M1058.5 583.0L1058.5 606.0" stroke="#e6e6e6" stroke-width="1.25" stroke-dasharray="2 1.2"/>
<path d="M1131.5 583.0L1131.5 606.0" stroke="#e6e6e6" stroke-width="1.25" stroke-dasharray="2 1.2"/>
<path d="M1134.5 583.0L1134.5 606.0" stroke="#e6e6e6" stroke-width="1.25" stroke-dasharray="2 1.2"/>
<path d="M455.0 633.5L1216.0 633.5" stroke="#4c6a4c" stroke-width="1.25" />
<path d="M1216.0 633.5L1239.0 633.5" stroke="#35c435" stroke-width="1.25" />
<path d="M524.0 635.5L1184.0 635.5" stroke="#a8a8a8" stroke-width="1.5" />
<path d="M524.0 638.5L1184.0 638.5" stroke="#e6e6e6" stroke-width="1.25" />
<path d="M691.5 613.0L691.5 617.0" stroke="#5a2068" stroke-width="1.25" />
<rect x="516.5" y="640.5" width="16.0" height="14.0" fill="#000" stroke="#e6e6e6" stroke-width="1.25" />
<rect x="547.5" y="640.5" width="15.0" height="14.0" fill="#000" stroke="#e6e6e6" stroke-width="1.25" />
<rect x="644.5" y="640.5" width="16.0" height="14.0" fill="#000" stroke="#e6e6e6" stroke-width="1.25" />
<rect x="710.5" y="640.5" width="30.0" height="14.0" fill="#000" stroke="#e6e6e6" stroke-width="1.25" />
<rect x="786.5" y="640.5" width="30.0" height="14.0" fill="#000" stroke="#e6e6e6" stroke-width="1.25" />
<rect x="962.5" y="640.5" width="30.0" height="14.0" fill="#000" stroke="#e6e6e6" stroke-width="1.25" />
<rect x="1041.5" y="640.5" width="30.0" height="14.0" fill="#000" stroke="#e6e6e6" stroke-width="1.25" />
<rect x="1118.5" y="640.5" width="30.0" height="14.0" fill="#000" stroke="#e6e6e6" stroke-width="1.25" />
<rect x="1167.5" y="645.5" width="18.0" height="9.0" fill="#000" stroke="#e6e6e6" stroke-width="1.25" />
<path d="M1148.2 641.6H1167M1148.2 645.5H1167.3" stroke="#e6e6e6" stroke-width="1.25" fill="none"/>
<path d="M1150.0 643.5L1166.0 643.5" stroke="#e6e6e6" stroke-width="1.5" stroke-dasharray="5 2"/>
<path d="M523.2 640.2V646.5H526.8V640.2" fill="none" stroke="#e6e6e6" stroke-width=".9"/>
<path d="M553.7 640.2V646.5H557.3V640.2" fill="none" stroke="#e6e6e6" stroke-width=".9"/>
<path d="M650.2 640.2V646.5H653.8V640.2" fill="none" stroke="#e6e6e6" stroke-width=".9"/>
<path d="M723.2 640.2V646.5H726.8V640.2" fill="none" stroke="#e6e6e6" stroke-width=".9"/>
<path d="M799.7 640.2V646.5H803.3V640.2" fill="none" stroke="#e6e6e6" stroke-width=".9"/>
<path d="M975.7 640.2V646.5H979.3V640.2" fill="none" stroke="#e6e6e6" stroke-width=".9"/>
<path d="M1054.7 640.2V646.5H1058.3V640.2" fill="none" stroke="#e6e6e6" stroke-width=".9"/>
<path d="M1131.5 640.2V646.5H1135.1V640.2" fill="none" stroke="#e6e6e6" stroke-width=".9"/>
<path d="M716.5 640.2L716.5 654.3" stroke="#e6e6e6" stroke-width="1.0" />
<path d="M734.5 640.2L734.5 654.3" stroke="#e6e6e6" stroke-width="1.0" />
<path d="M795.5 640.2L795.5 654.3" stroke="#e6e6e6" stroke-width="1.0" />
<path d="M808.5 640.2L808.5 654.3" stroke="#e6e6e6" stroke-width="1.0" />
<path d="M532.5 641.6H547M532.5 645.5H547M562.7 641.6H644.4M562.7 645.5H644.4" stroke="#e6e6e6" stroke-width="1.25" fill="none"/>
<path d="M586.0 643.5L630.0 643.5" stroke="#e6e6e6" stroke-width="1.62" stroke-dasharray="5 2"/>
<path d="M586.0 639.5L622.0 639.5" stroke="#e6e6e6" stroke-width="1.5" />
<path d="M816.4 641.6H891.6M816.4 645.5H891.6" stroke="#e6e6e6" stroke-width="1.25" fill="none"/>
<rect x="831.5" y="648.5" width="103.0" height="20.0" fill="#000" stroke="#e6e6e6" stroke-width="1.25" />
<path d="M455.0 652.5L1207.0 652.5" stroke="#a2a2a2" stroke-width="1.12" stroke-dasharray="7 2 1.5 2"/>
<path d="M522.5 654.3V724.5H527.5V654.3" fill="none" stroke="#e6e6e6" stroke-width="1.25"/>
<path d="M552.5 654.3V724.5H557.5V654.3" fill="none" stroke="#e6e6e6" stroke-width="1.25"/>
<path d="M649.5 654.3V724.5H654.5V654.3" fill="none" stroke="#e6e6e6" stroke-width="1.25"/>
<path d="M716.5 654.3V724.5H721.5V654.3" fill="none" stroke="#e6e6e6" stroke-width="1.25"/>
<path d="M722.5 654.3V724.5H728.5V654.3" fill="none" stroke="#e6e6e6" stroke-width="1.25"/>
<path d="M729.5 654.3V724.5H734.5V654.3" fill="none" stroke="#e6e6e6" stroke-width="1.25"/>
<path d="M792.5 654.3V724.5H797.5V654.3" fill="none" stroke="#e6e6e6" stroke-width="1.25"/>
<path d="M800.5 654.3V724.5H804.5V654.3" fill="none" stroke="#e6e6e6" stroke-width="1.25"/>
<path d="M806.5 654.3V724.5H811.5V654.3" fill="none" stroke="#e6e6e6" stroke-width="1.25"/>
<path d="M967.5 654.3V724.5H972.5V654.3" fill="none" stroke="#e6e6e6" stroke-width="1.25"/>
<path d="M981.5 654.3V724.5H986.5V654.3" fill="none" stroke="#e6e6e6" stroke-width="1.25"/>
<path d="M1046.5 654.3V724.5H1051.5V654.3" fill="none" stroke="#e6e6e6" stroke-width="1.25"/>
<path d="M1054.5 654.3V724.5H1058.5V654.3" fill="none" stroke="#e6e6e6" stroke-width="1.25"/>
<path d="M1060.5 654.3V724.5H1065.5V654.3" fill="none" stroke="#e6e6e6" stroke-width="1.25"/>
<path d="M1123.5 654.3V724.5H1128.5V654.3" fill="none" stroke="#e6e6e6" stroke-width="1.25"/>
<path d="M1130.5 654.3V724.5H1135.5V654.3" fill="none" stroke="#e6e6e6" stroke-width="1.25"/>
<path d="M1137.5 654.3V724.5H1142.5V654.3" fill="none" stroke="#e6e6e6" stroke-width="1.25"/>
<path d="M1172.5 654.3V724.5H1178.5V654.3" fill="none" stroke="#e6e6e6" stroke-width="1.25"/>
<path d="M1186.5 654.3V724.5H1192.5V654.3" fill="none" stroke="#e6e6e6" stroke-width="1.25"/>
<path d="M836.5 668V739.5H841.5V668" fill="none" stroke="#e6e6e6" stroke-width="1.25"/>
<path d="M854.5 668V739.5H859.5V668" fill="none" stroke="#e6e6e6" stroke-width="1.25"/>
<path d="M871.5 668V739.5H876.5V668" fill="none" stroke="#e6e6e6" stroke-width="1.25"/>
<path d="M889.5 668V739.5H894.5V668" fill="none" stroke="#e6e6e6" stroke-width="1.25"/>
<path d="M907.5 668V739.5H912.5V668" fill="none" stroke="#e6e6e6" stroke-width="1.25"/>
<path d="M923.5 668V739.5H929.5V668" fill="none" stroke="#e6e6e6" stroke-width="1.25"/>
<rect x="891.5" y="640.5" width="16.0" height="14.0" fill="none" stroke="#3d63c9" stroke-width="1.5" />
<path d="M897.5 654.3V724.5H902.5V654.3" fill="none" stroke="#3d63c9" stroke-width="1.25"/>
<path d="M898 647.5h3.5M899.7 645v5" stroke="#888" stroke-width="1"/>
<circle cx="525" cy="168.5" r="7.3" fill="#000" stroke="#cfcfcf" stroke-width="1.15"/>
<text x="525" y="171.0" font-size="7.2" text-anchor="middle" fill="#ececec">A</text>
<circle cx="555.5" cy="169" r="7.3" fill="#000" stroke="#cfcfcf" stroke-width="1.15"/>
<rect x="547.0" y="165.8" width="5" height="6" fill="#000"/>
<text x="554.3" y="171.6" font-size="7" text-anchor="middle" fill="#ececec">A.5</text>
<circle cx="579.8" cy="168.5" r="7.3" fill="#000" stroke="#cfcfcf" stroke-width="1.15"/>
<text x="579.8" y="171.0" font-size="7.2" text-anchor="middle" fill="#ececec">B</text>
<circle cx="652" cy="168.5" r="7.3" fill="#000" stroke="#cfcfcf" stroke-width="1.15"/>
<text x="652" y="171.0" font-size="7.2" text-anchor="middle" fill="#ececec">C</text>
<circle cx="724.6" cy="168.5" r="7.3" fill="#000" stroke="#cfcfcf" stroke-width="1.15"/>
<text x="724.6" y="171.0" font-size="7.2" text-anchor="middle" fill="#ececec">D</text>
<circle cx="801.4" cy="168.5" r="7.3" fill="#000" stroke="#cfcfcf" stroke-width="1.15"/>
<text x="801.4" y="171.0" font-size="7.2" text-anchor="middle" fill="#ececec">E</text>
<circle cx="898" cy="168.5" r="7.3" fill="#000" stroke="#cfcfcf" stroke-width="1.15"/>
<text x="898" y="171.0" font-size="7.2" text-anchor="middle" fill="#ececec">G</text>
<circle cx="977.5" cy="168.5" r="7.3" fill="#000" stroke="#cfcfcf" stroke-width="1.15"/>
<text x="977.5" y="171.0" font-size="7.2" text-anchor="middle" fill="#ececec">H</text>
<circle cx="1056.4" cy="176.2" r="7.3" fill="#000" stroke="#cfcfcf" stroke-width="1.15"/>
<text x="1056.4" y="178.7" font-size="7.2" text-anchor="middle" fill="#ececec">J</text>
<circle cx="1133.2" cy="168.5" r="7.3" fill="#000" stroke="#cfcfcf" stroke-width="1.15"/>
<text x="1133.2" y="171.0" font-size="7.2" text-anchor="middle" fill="#ececec">K</text>
<circle cx="1183" cy="168.5" r="7.3" fill="#000" stroke="#cfcfcf" stroke-width="1.15"/>
<text x="1183" y="171.0" font-size="7.2" text-anchor="middle" fill="#ececec">L</text>
<circle cx="900.6" cy="618.3" r="6.8" fill="#000" stroke="#e6e6e6" stroke-width="1.25"/>
<rect x="892" y="615" width="5" height="6.4" fill="#000"/>
<text x="899.4" y="620.9" font-size="7" text-anchor="middle" fill="#ececec">G.2</text>
<text x="1204.3" y="204.0" font-size="5" text-anchor="end" fill="#dcdcdc" font-weight="bold">T.O. ELEV SHAFT</text>
<text x="1204.3" y="209.8" font-size="4.7" text-anchor="end" fill="#dcdcdc" font-weight="bold">122' - 0&quot;</text>
<text x="1204.3" y="235.0" font-size="5" text-anchor="end" fill="#dcdcdc" font-weight="bold">TO ELEV LOBBY</text>
<text x="1204.3" y="240.8" font-size="4.7" text-anchor="end" fill="#dcdcdc" font-weight="bold">112' - 0&quot;</text>
<text x="1204.3" y="266.0" font-size="5" text-anchor="end" fill="#dcdcdc" font-weight="bold">ROOF DECK</text>
<text x="1204.3" y="271.8" font-size="4.7" text-anchor="end" fill="#dcdcdc" font-weight="bold">100' - 0&quot;</text>
<text x="1204.3" y="313.2" font-size="5" text-anchor="end" fill="#dcdcdc" font-weight="bold">LEVEL 8</text>
<text x="1204.3" y="319.0" font-size="4.7" text-anchor="end" fill="#dcdcdc" font-weight="bold">91' - 0&quot;</text>
<text x="1204.3" y="352.4" font-size="5" text-anchor="end" fill="#dcdcdc" font-weight="bold">LEVEL 7</text>
<text x="1204.3" y="358.2" font-size="4.7" text-anchor="end" fill="#dcdcdc" font-weight="bold">80' - 4&quot;</text>
<text x="1204.3" y="392.4" font-size="5" text-anchor="end" fill="#dcdcdc" font-weight="bold">LEVEL 6</text>
<text x="1204.3" y="398.2" font-size="4.7" text-anchor="end" fill="#dcdcdc" font-weight="bold">69' - 0&quot;</text>
<text x="1204.3" y="431.2" font-size="5" text-anchor="end" fill="#dcdcdc" font-weight="bold">LEVEL 5</text>
<text x="1204.3" y="437.0" font-size="4.7" text-anchor="end" fill="#dcdcdc" font-weight="bold">57' - 8&quot;</text>
<text x="1204.3" y="468.7" font-size="5" text-anchor="end" fill="#dcdcdc" font-weight="bold">LEVEL 4</text>
<text x="1204.3" y="474.5" font-size="4.7" text-anchor="end" fill="#dcdcdc" font-weight="bold">47' - 0&quot;</text>
<text x="1204.3" y="505.9" font-size="5" text-anchor="end" fill="#dcdcdc" font-weight="bold">LEVEL 3 PT</text>
<text x="1204.3" y="511.7" font-size="4.7" text-anchor="end" fill="#dcdcdc" font-weight="bold">36' - 4&quot;</text>
<text x="1204.3" y="543.4" font-size="5" text-anchor="end" fill="#dcdcdc" font-weight="bold">GENERATOR</text>
<text x="1204.3" y="548.6" font-size="5" text-anchor="end" fill="#dcdcdc" font-weight="bold">ROOM ROOF</text>
<text x="1204.3" y="554.4" font-size="4.7" text-anchor="end" fill="#dcdcdc" font-weight="bold">24' - 0&quot;</text>
<text x="1204.3" y="580.1" font-size="5" text-anchor="end" fill="#dcdcdc" font-weight="bold">LEVEL</text>
<text x="1204.3" y="585.9" font-size="4.7" text-anchor="end" fill="#dcdcdc" font-weight="bold">15' - 0&quot;</text>
<text x="1204.3" y="590.7" font-size="5" text-anchor="end" fill="#dcdcdc" font-weight="bold">MECHANICAL</text>
<text x="1204.3" y="595.9" font-size="5" text-anchor="end" fill="#dcdcdc" font-weight="bold">LEVEL</text>
<text x="1204.3" y="601.7" font-size="4.7" text-anchor="end" fill="#dcdcdc" font-weight="bold">10' - 0&quot;</text>
<text x="1204.3" y="652.3" font-size="5" text-anchor="end" fill="#dcdcdc" font-weight="bold">ELEV PIT</text>
<text x="1204.3" y="658.1" font-size="4.7" text-anchor="end" fill="#dcdcdc" font-weight="bold">-6' - 6&quot;</text>
<circle cx="1211.7" cy="204.6" r="3.5" fill="#0b1748" stroke="#2342cc" stroke-width="1.1"/><path d="M1211.7 204.6V201.1A3.5 3.5 0 0 0 1208.2 204.6ZM1211.7 204.6V208.1A3.5 3.5 0 0 0 1215.2 204.6Z" fill="#2342cc"/>
<circle cx="1211.7" cy="235.6" r="3.5" fill="#0b1748" stroke="#2342cc" stroke-width="1.1"/><path d="M1211.7 235.6V232.1A3.5 3.5 0 0 0 1208.2 235.6ZM1211.7 235.6V239.1A3.5 3.5 0 0 0 1215.2 235.6Z" fill="#2342cc"/>
<circle cx="1211.7" cy="266.6" r="3.5" fill="#0b1748" stroke="#2342cc" stroke-width="1.1"/><path d="M1211.7 266.6V263.1A3.5 3.5 0 0 0 1208.2 266.6ZM1211.7 266.6V270.1A3.5 3.5 0 0 0 1215.2 266.6Z" fill="#2342cc"/>
<circle cx="1211.7" cy="313.8" r="3.5" fill="#0b1748" stroke="#2342cc" stroke-width="1.1"/><path d="M1211.7 313.8V310.3A3.5 3.5 0 0 0 1208.2 313.8ZM1211.7 313.8V317.3A3.5 3.5 0 0 0 1215.2 313.8Z" fill="#2342cc"/>
<circle cx="1211.7" cy="353" r="3.5" fill="#0b1748" stroke="#2342cc" stroke-width="1.1"/><path d="M1211.7 353V349.5A3.5 3.5 0 0 0 1208.2 353ZM1211.7 353V356.5A3.5 3.5 0 0 0 1215.2 353Z" fill="#2342cc"/>
<circle cx="1211.7" cy="393" r="3.5" fill="#0b1748" stroke="#2342cc" stroke-width="1.1"/><path d="M1211.7 393V389.5A3.5 3.5 0 0 0 1208.2 393ZM1211.7 393V396.5A3.5 3.5 0 0 0 1215.2 393Z" fill="#2342cc"/>
<circle cx="1211.7" cy="431.8" r="3.5" fill="#0b1748" stroke="#2342cc" stroke-width="1.1"/><path d="M1211.7 431.8V428.3A3.5 3.5 0 0 0 1208.2 431.8ZM1211.7 431.8V435.3A3.5 3.5 0 0 0 1215.2 431.8Z" fill="#2342cc"/>
<circle cx="1211.7" cy="469.3" r="3.5" fill="#0b1748" stroke="#2342cc" stroke-width="1.1"/><path d="M1211.7 469.3V465.8A3.5 3.5 0 0 0 1208.2 469.3ZM1211.7 469.3V472.8A3.5 3.5 0 0 0 1215.2 469.3Z" fill="#2342cc"/>
<circle cx="1211.7" cy="506.5" r="3.5" fill="#0b1748" stroke="#2342cc" stroke-width="1.1"/><path d="M1211.7 506.5V503.0A3.5 3.5 0 0 0 1208.2 506.5ZM1211.7 506.5V510.0A3.5 3.5 0 0 0 1215.2 506.5Z" fill="#2342cc"/>
<circle cx="1211.7" cy="543.8" r="3.5" fill="#0b1748" stroke="#2342cc" stroke-width="1.1"/><path d="M1211.7 543.8V540.3A3.5 3.5 0 0 0 1208.2 543.8ZM1211.7 543.8V547.3A3.5 3.5 0 0 0 1215.2 543.8Z" fill="#2342cc"/>
<circle cx="1211.7" cy="549.2" r="3.5" fill="#0b1748" stroke="#2342cc" stroke-width="1.1"/><path d="M1211.7 549.2V545.7A3.5 3.5 0 0 0 1208.2 549.2ZM1211.7 549.2V552.7A3.5 3.5 0 0 0 1215.2 549.2Z" fill="#2342cc"/>
<circle cx="1211.7" cy="580.7" r="3.5" fill="#0b1748" stroke="#2342cc" stroke-width="1.1"/><path d="M1211.7 580.7V577.2A3.5 3.5 0 0 0 1208.2 580.7ZM1211.7 580.7V584.2A3.5 3.5 0 0 0 1215.2 580.7Z" fill="#2342cc"/>
<circle cx="1211.7" cy="596.5" r="3.5" fill="#0b1748" stroke="#2342cc" stroke-width="1.1"/><path d="M1211.7 596.5V593.0A3.5 3.5 0 0 0 1208.2 596.5ZM1211.7 596.5V600.0A3.5 3.5 0 0 0 1215.2 596.5Z" fill="#2342cc"/>
<circle cx="1211.7" cy="652.9" r="3.5" fill="#0b1748" stroke="#2342cc" stroke-width="1.1"/><path d="M1211.7 652.9V649.4A3.5 3.5 0 0 0 1208.2 652.9ZM1211.7 652.9V656.4A3.5 3.5 0 0 0 1215.2 652.9Z" fill="#2342cc"/>
<circle cx="1211.7" cy="633.3" r="3.5" fill="#000" stroke="#f2f2f2" stroke-width="1.1"/><path d="M1211.7 633.3V629.8A3.5 3.5 0 0 0 1208.2 633.3ZM1211.7 633.3V636.8A3.5 3.5 0 0 0 1215.2 633.3Z" fill="#f2f2f2"/>
<circle cx="1211.7" cy="638.8" r="3.5" fill="#000" stroke="#f2f2f2" stroke-width="1.1"/><path d="M1211.7 638.8V635.3A3.5 3.5 0 0 0 1208.2 638.8ZM1211.7 638.8V642.3A3.5 3.5 0 0 0 1215.2 638.8Z" fill="#f2f2f2"/>
<text x="1204.3" y="632.6" font-size="5.2" text-anchor="end" fill="#dcdcdc" font-weight="bold">T/FDN LEVEL 20</text>
<text x="1204.3" y="638" font-size="5.2" text-anchor="end" fill="#dcdcdc" font-weight="bold">LEVEL 22</text>
<text x="1204.3" y="643" font-size="5" text-anchor="end" fill="#dcdcdc" font-weight="bold">-1' - 6"</text>
<path d="M1182 596.5l4-2.5" stroke="#e040e0" stroke-width="1"/>
</svg>
<div style="position:absolute;left:0;top:0;width:1069px;height:0.8px;background:#fafafa"></div><div style="position:absolute;left:0;top:0;width:0.6px;height:670px;background:#fafafa"></div>
<div style="position:absolute;left:0.6px;top:0.8px;width:1069px;height:670px;border:3.1px solid #ee1208;border-right:none;border-bottom:none;box-sizing:border-box"></div>
<div style="position:absolute;left:0.6px;top:0.8px;width:135.6px;height:18.1px;background:#fb0d07"></div><span class="t" style="left:5.2px;top:5.2px;font-size:10px;line-height:12px;color:#3a0000;transform:scaleX(1.163);font-weight:bold;">Temporary Hide/Isolate</span></div>
</div></body></html>
